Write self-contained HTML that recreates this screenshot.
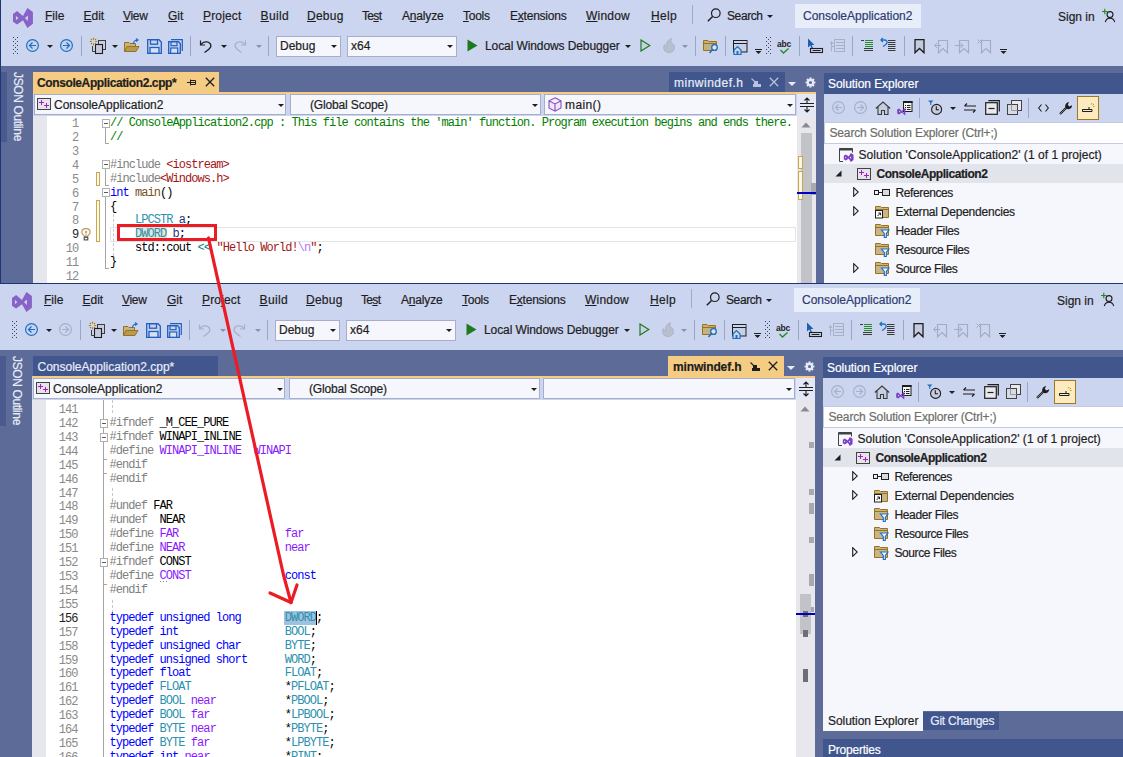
<!DOCTYPE html>
<html><head><meta charset="utf-8"><style>
html,body{margin:0;padding:0;}
body{width:1123px;height:757px;overflow:hidden;position:relative;background:#CCD5F0;font-family:"Liberation Sans",sans-serif;}
#r>div{position:absolute;}
#r div{box-sizing:content-box;}
.t{position:absolute;white-space:pre;-webkit-text-stroke:0.2px currentColor;}
.c{position:absolute;white-space:pre;font-family:"Liberation Mono",monospace;font-size:12px;line-height:13.92px;letter-spacing:-0.945px;}
u{text-decoration:underline;text-underline-offset:1px;}
</style></head><body><div id="r" style="position:absolute;left:0;top:0;width:1123px;height:757px;overflow:hidden">
<div style="left:0px;top:0px;width:1123px;height:66px;background:#CCD5F0;"></div>
<svg style="position:absolute;left:13px;top:8px;" width="20" height="20" viewBox="0 0 20 20"><path fill="#8862C6" fill-rule="evenodd" d="M0,5.9 L4.1,3.1 L10,7.9 L14.4,0 L19.9,3.9 L19.9,15.8 L14.4,19.9 L10,12.2 L4.1,16.6 L0,13.8 Z M2.9,7.9 L5.4,10.1 L2.9,12.2 Z M14.9,7.5 L12,10.1 L14.9,13 Z"/></svg>
<div class="t" style="left:45px;top:9.84px;font-size:12px;line-height:12px;color:#1E1E1E;font-weight:normal;font-family:'Liberation Sans',sans-serif;letter-spacing:0.000px;"><u>F</u>ile</div>
<div class="t" style="left:83.5px;top:9.84px;font-size:12px;line-height:12px;color:#1E1E1E;font-weight:normal;font-family:'Liberation Sans',sans-serif;letter-spacing:0.000px;"><u>E</u>dit</div>
<div class="t" style="left:123px;top:9.84px;font-size:12px;line-height:12px;color:#1E1E1E;font-weight:normal;font-family:'Liberation Sans',sans-serif;letter-spacing:-0.333px;"><u>V</u>iew</div>
<div class="t" style="left:168px;top:9.84px;font-size:12px;line-height:12px;color:#1E1E1E;font-weight:normal;font-family:'Liberation Sans',sans-serif;letter-spacing:0.000px;"><u>G</u>it</div>
<div class="t" style="left:203px;top:9.84px;font-size:12px;line-height:12px;color:#1E1E1E;font-weight:normal;font-family:'Liberation Sans',sans-serif;letter-spacing:0.167px;"><u>P</u>roject</div>
<div class="t" style="left:260.5px;top:9.84px;font-size:12px;line-height:12px;color:#1E1E1E;font-weight:normal;font-family:'Liberation Sans',sans-serif;letter-spacing:0.375px;"><u>B</u>uild</div>
<div class="t" style="left:307px;top:9.84px;font-size:12px;line-height:12px;color:#1E1E1E;font-weight:normal;font-family:'Liberation Sans',sans-serif;letter-spacing:0.250px;"><u>D</u>ebug</div>
<div class="t" style="left:362px;top:9.84px;font-size:12px;line-height:12px;color:#1E1E1E;font-weight:normal;font-family:'Liberation Sans',sans-serif;letter-spacing:-0.667px;">Te<u>s</u>t</div>
<div class="t" style="left:402px;top:9.84px;font-size:12px;line-height:12px;color:#1E1E1E;font-weight:normal;font-family:'Liberation Sans',sans-serif;letter-spacing:-0.167px;">A<u>n</u>alyze</div>
<div class="t" style="left:463px;top:9.84px;font-size:12px;line-height:12px;color:#1E1E1E;font-weight:normal;font-family:'Liberation Sans',sans-serif;letter-spacing:-0.250px;"><u>T</u>ools</div>
<div class="t" style="left:510px;top:9.84px;font-size:12px;line-height:12px;color:#1E1E1E;font-weight:normal;font-family:'Liberation Sans',sans-serif;letter-spacing:-0.222px;">E<u>x</u>tensions</div>
<div class="t" style="left:586px;top:9.84px;font-size:12px;line-height:12px;color:#1E1E1E;font-weight:normal;font-family:'Liberation Sans',sans-serif;letter-spacing:0.200px;"><u>W</u>indow</div>
<div class="t" style="left:651px;top:9.84px;font-size:12px;line-height:12px;color:#1E1E1E;font-weight:normal;font-family:'Liberation Sans',sans-serif;letter-spacing:0.333px;"><u>H</u>elp</div>
<div style="left:692px;top:5px;width:1px;height:19px;background:#A0AAC8;"></div>
<svg style="position:absolute;left:707px;top:8px;" width="14" height="14" viewBox="0 0 14 14"><circle cx="8.8" cy="5.2" r="4.3" fill="none" stroke="#1E1E1E" stroke-width="1.2"/><path d="M5.6,8.4 L0.8,13.2" stroke="#1E1E1E" stroke-width="1.4"/></svg>
<div class="t" style="left:727px;top:9.84px;font-size:12px;line-height:12px;color:#1E1E1E;font-weight:normal;font-family:'Liberation Sans',sans-serif;letter-spacing:-0.400px;">Search</div>
<svg style="position:absolute;left:767px;top:15px;" width="6" height="4.0" viewBox="0 0 6 4.0"><path d="M0,0 H6 L3.0,3.0 Z" fill="#1E1E1E"/></svg>
<div style="left:795px;top:4px;width:126px;height:24px;background:#E8EDFA;"></div>
<div class="t" style="left:803px;top:9.84px;font-size:12px;line-height:12px;color:#2E3A72;font-weight:normal;font-family:'Liberation Sans',sans-serif;letter-spacing:0.000px;">ConsoleApplication2</div>
<div class="t" style="left:1058px;top:10.84px;font-size:12px;line-height:12px;color:#1E1E1E;font-weight:normal;font-family:'Liberation Sans',sans-serif;letter-spacing:0.000px;">Sign in</div>
<svg style="position:absolute;left:1101px;top:8px;" width="15" height="15" viewBox="0 0 15 15"><path d="M1,3.5 H6.5 M3.75,0.8 V6.2" stroke="#1E8A1E" stroke-width="1.1"/><circle cx="9" cy="6.6" r="3" fill="none" stroke="#1E1E1E" stroke-width="1.1"/><path d="M4.3,14.2 C4.8,11.5 6.6,10.2 9,10.2 C11.4,10.2 13.2,11.5 13.7,14.2" fill="none" stroke="#1E1E1E" stroke-width="1.1"/></svg>
<svg style="position:absolute;left:13px;top:37px;" width="5" height="17" viewBox="0 0 5 17"><rect x="0" y="0" width="1" height="1" fill="#3C4168"/><rect x="4" y="0" width="1" height="1" fill="#3C4168"/><rect x="2" y="2" width="1" height="1" fill="#3C4168"/><rect x="0" y="4" width="1" height="1" fill="#3C4168"/><rect x="4" y="4" width="1" height="1" fill="#3C4168"/><rect x="2" y="6" width="1" height="1" fill="#3C4168"/><rect x="0" y="8" width="1" height="1" fill="#3C4168"/><rect x="4" y="8" width="1" height="1" fill="#3C4168"/><rect x="2" y="10" width="1" height="1" fill="#3C4168"/><rect x="0" y="12" width="1" height="1" fill="#3C4168"/><rect x="4" y="12" width="1" height="1" fill="#3C4168"/><rect x="2" y="14" width="1" height="1" fill="#3C4168"/><rect x="0" y="16" width="1" height="1" fill="#3C4168"/><rect x="4" y="16" width="1" height="1" fill="#3C4168"/></svg>
<svg style="position:absolute;left:26px;top:39px;" width="13" height="13" viewBox="0 0 13 13"><circle cx="6.5" cy="6.5" r="5.9" fill="#C6D3EE" stroke="#1E6FC0" stroke-width="1.2"/><path d="M10,6.5 H3.5 M6.5,3.5 L3.5,6.5 L6.5,9.5" fill="none" stroke="#1E6FC0" stroke-width="1.2"/></svg>
<svg style="position:absolute;left:47px;top:45px;" width="6" height="4.0" viewBox="0 0 6 4.0"><path d="M0,0 H6 L3.0,3.0 Z" fill="#1E1E1E"/></svg>
<svg style="position:absolute;left:60px;top:39px;" width="13" height="13" viewBox="0 0 13 13"><circle cx="6.5" cy="6.5" r="5.9" fill="#C6D3EE" stroke="#1E6FC0" stroke-width="1.2"/><path d="M3,6.5 H9.5 M6.5,3.5 L9.5,6.5 L6.5,9.5" fill="none" stroke="#1E6FC0" stroke-width="1.2"/></svg>
<div style="left:81px;top:36px;width:1px;height:20px;background:#9AA6C8;"></div>
<svg style="position:absolute;left:89px;top:37px;" width="18" height="18" viewBox="0 0 18 18"><rect x="9.5" y="3.5" width="7" height="9" fill="#C8CEE0" stroke="#3C3C3C" stroke-width="1"/><rect x="6.5" y="7.5" width="7" height="9" fill="#C4CADC" stroke="#1E1E1E" stroke-width="1.1"/><path d="M3.5,9 V14.5 H6.5" fill="none" stroke="#3C3C3C" stroke-width="1"/><g stroke="#B07C08" stroke-width="1.1"><path d="M4.5,0.8 V2.8 M4.5,6.2 V8.2 M0.8,4.5 H2.8 M6.2,4.5 H8.2 M1.9,1.9 L3,3 M6,6 L7.1,7.1 M7.1,1.9 L6,3 M3,6 L1.9,7.1"/></g></svg>
<svg style="position:absolute;left:112px;top:45px;" width="6" height="4.0" viewBox="0 0 6 4.0"><path d="M0,0 H6 L3.0,3.0 Z" fill="#1E1E1E"/></svg>
<svg style="position:absolute;left:124px;top:38px;" width="16" height="15" viewBox="0 0 16 15"><path d="M0.5,4.5 H5 L6,5.5 H11.5 V13.5 H0.5 Z" fill="#C9B37A" stroke="#9A7318"/><path d="M0.5,13.5 L3,8.5 H15 L12,13.5 Z" fill="#B69A5A" stroke="#9A7318"/><path d="M9.5,6 C9.5,3 11,2 13.5,2 M12,0.5 L14,2 L12,3.5" fill="none" stroke="#1E6FC0" stroke-width="1.2"/></svg>
<svg style="position:absolute;left:147px;top:39px;" width="15" height="15" viewBox="0 0 15 15"><path d="M0.7,0.7 H12 L14.3,3 V14.3 H0.7 Z" fill="#C9D3EE" stroke="#1F5FBF" stroke-width="1.3"/><rect x="3.5" y="0.7" width="7" height="4.5" fill="none" stroke="#1F5FBF" stroke-width="1.3"/><rect x="3" y="8.5" width="9" height="5.8" fill="#D8E0F4" stroke="#1F5FBF" stroke-width="1.3"/></svg>
<svg style="position:absolute;left:168px;top:39px;" width="15" height="15" viewBox="0 0 15 15"><path d="M3,0.7 H14.3 V12" fill="none" stroke="#1F5FBF" stroke-width="1.2"/><path d="M0.7,2.7 H10.5 L12.3,4.5 V14.3 H0.7 Z" fill="#C9D3EE" stroke="#1F5FBF" stroke-width="1.3"/><rect x="3" y="2.7" width="6" height="4" fill="none" stroke="#1F5FBF" stroke-width="1.2"/><rect x="2.7" y="9" width="7" height="5.3" fill="#D8E0F4" stroke="#1F5FBF" stroke-width="1.2"/></svg>
<div style="left:190px;top:36px;width:1px;height:20px;background:#9AA6C8;"></div>
<svg style="position:absolute;left:199px;top:39px;" width="13" height="14" viewBox="0 0 13 14"><g ><path d="M1.5,1.5 V6 H6" fill="none" stroke="#1E1E1E" stroke-width="1.2"/><path d="M1.8,5.8 C4,2.5 9,2 11,4.5 C13,7 11.5,10 5.5,13.5" fill="none" stroke="#1E1E1E" stroke-width="1.3"/></g></svg>
<svg style="position:absolute;left:221px;top:45px;" width="6" height="4.0" viewBox="0 0 6 4.0"><path d="M0,0 H6 L3.0,3.0 Z" fill="#1E1E1E"/></svg>
<svg style="position:absolute;left:234px;top:39px;" width="13" height="14" viewBox="0 0 13 14"><g transform="translate(13,0) scale(-1,1)"><path d="M1.5,1.5 V6 H6" fill="none" stroke="#A8B0C6" stroke-width="1.2"/><path d="M1.8,5.8 C4,2.5 9,2 11,4.5 C13,7 11.5,10 5.5,13.5" fill="none" stroke="#A8B0C6" stroke-width="1.3"/></g></svg>
<svg style="position:absolute;left:256px;top:45px;" width="6" height="4.0" viewBox="0 0 6 4.0"><path d="M0,0 H6 L3.0,3.0 Z" fill="#8A92A8"/></svg>
<div style="left:268px;top:36px;width:1px;height:20px;background:#9AA6C8;"></div>
<div style="left:276px;top:36px;width:63px;height:19px;background:#F5F7FC;border:1px solid #A6AECB;"></div>
<div class="t" style="left:280px;top:40.34px;font-size:12px;line-height:12px;color:#1E1E1E;font-weight:normal;font-family:'Liberation Sans',sans-serif;">Debug</div>
<svg style="position:absolute;left:331px;top:45px;" width="6" height="4.0" viewBox="0 0 6 4.0"><path d="M0,0 H6 L3.0,3.0 Z" fill="#1E1E1E"/></svg>
<div style="left:347px;top:36px;width:108px;height:19px;background:#F5F7FC;border:1px solid #A6AECB;"></div>
<div class="t" style="left:351px;top:40.34px;font-size:12px;line-height:12px;color:#1E1E1E;font-weight:normal;font-family:'Liberation Sans',sans-serif;">x64</div>
<svg style="position:absolute;left:447px;top:45px;" width="6" height="4.0" viewBox="0 0 6 4.0"><path d="M0,0 H6 L3.0,3.0 Z" fill="#1E1E1E"/></svg>
<svg style="position:absolute;left:467px;top:39px;" width="11" height="13" viewBox="0 0 11 13"><path d="M0.5,0.5 L10.5,6.5 L0.5,12.5 Z" fill="#1E7A1E"/></svg>
<div class="t" style="left:485px;top:40.34px;font-size:12px;line-height:12px;color:#1E1E1E;font-weight:normal;font-family:'Liberation Sans',sans-serif;letter-spacing:-0.095px;">Local Windows Debugger</div>
<svg style="position:absolute;left:625px;top:45px;" width="6" height="4.0" viewBox="0 0 6 4.0"><path d="M0,0 H6 L3.0,3.0 Z" fill="#1E1E1E"/></svg>
<svg style="position:absolute;left:639.5px;top:39px;" width="11" height="13" viewBox="0 0 11 13"><path d="M1,1 L9.8,6.5 L1,12 Z" fill="#C8D2E6" stroke="#1E7A1E" stroke-width="1.2"/></svg>
<svg style="position:absolute;left:662px;top:38px;" width="14" height="15" viewBox="0 0 14 15"><path d="M7,14.5 C2,14.5 0.5,10 2.5,6.5 C3,8.5 4,9 5,9 C3.5,5 6,2 9.5,0.5 C8,4 10,5 11,6 C13.5,8.5 13,14.5 7,14.5 Z" fill="#B8BFD0" stroke="#A8AFC0" stroke-width="0.8"/></svg>
<svg style="position:absolute;left:682px;top:45px;" width="6" height="4.0" viewBox="0 0 6 4.0"><path d="M0,0 H6 L3.0,3.0 Z" fill="#8A92A8"/></svg>
<div style="left:695px;top:36px;width:1px;height:20px;background:#9AA6C8;"></div>
<svg style="position:absolute;left:703px;top:39px;" width="16" height="15" viewBox="0 0 16 15"><path d="M0.5,1.5 H5 L6,2.5 H13.5 V11.5 H0.5 Z" fill="#C4B080" stroke="#9A7318"/><path d="M0.5,4.5 H13.5" stroke="#9A7318"/><circle cx="11.5" cy="8.5" r="2.8" fill="#DCE6F8" stroke="#1E6FC0" stroke-width="1.3"/><path d="M9.5,10.5 L6.5,14" stroke="#1E6FC0" stroke-width="1.5"/></svg>
<div style="left:725px;top:36px;width:1px;height:20px;background:#9AA6C8;"></div>
<svg style="position:absolute;left:733px;top:40px;" width="15" height="15" viewBox="0 0 15 15"><rect x="0.5" y="0.5" width="13.5" height="11.5" fill="#C8D0E8" stroke="#1E1E1E"/><rect x="1" y="1" width="12.5" height="2.5" fill="#CCD5F0"/><path d="M0.5,3.5 H14" stroke="#1E1E1E"/><path d="M1,10 L4.5,6.5 L8,10 V14.5 H1 Z" fill="#CCD5F0" stroke="#1E6FC0" stroke-width="1.2"/><rect x="3.5" y="11" width="2" height="3.5" fill="#1E6FC0"/></svg>
<svg style="position:absolute;left:755px;top:48px;" width="7" height="7" viewBox="0 0 7 7"><path d="M0,1.5 H7" stroke="#1E1E1E"/><path d="M0.5,3 H6.5 L3.5,6 Z" fill="#1E1E1E"/></svg>
<svg style="position:absolute;left:766px;top:37px;" width="5" height="17" viewBox="0 0 5 17"><rect x="0" y="0" width="1" height="1" fill="#3C4168"/><rect x="4" y="0" width="1" height="1" fill="#3C4168"/><rect x="2" y="2" width="1" height="1" fill="#3C4168"/><rect x="0" y="4" width="1" height="1" fill="#3C4168"/><rect x="4" y="4" width="1" height="1" fill="#3C4168"/><rect x="2" y="6" width="1" height="1" fill="#3C4168"/><rect x="0" y="8" width="1" height="1" fill="#3C4168"/><rect x="4" y="8" width="1" height="1" fill="#3C4168"/><rect x="2" y="10" width="1" height="1" fill="#3C4168"/><rect x="0" y="12" width="1" height="1" fill="#3C4168"/><rect x="4" y="12" width="1" height="1" fill="#3C4168"/><rect x="2" y="14" width="1" height="1" fill="#3C4168"/><rect x="0" y="16" width="1" height="1" fill="#3C4168"/><rect x="4" y="16" width="1" height="1" fill="#3C4168"/></svg>
<svg style="position:absolute;left:777px;top:37px;" width="15" height="18" viewBox="0 0 15 18"><text x="0" y="10" font-family="Liberation Sans" font-weight="bold" font-size="8.5" fill="#1E1E1E" letter-spacing="-0.2">abc</text><path d="M3.5,13 L6.5,16 L11.5,11.5" fill="none" stroke="#1E8A1E" stroke-width="1.3"/></svg>
<div style="left:799px;top:36px;width:1px;height:20px;background:#9AA6C8;"></div>
<svg style="position:absolute;left:807px;top:38px;" width="17" height="16" viewBox="0 0 17 16"><path d="M1,0.5 L1,9.5 L3.2,7.5 L4.8,10.5 L6,10 L4.6,7 L7.5,7 Z" fill="#1E5FB0"/><rect x="3.5" y="10.5" width="12" height="4" fill="none" stroke="#1E1E1E" stroke-width="1.1"/><path d="M5.5,12.5 H13.5" stroke="#1E1E1E"/></svg>
<svg style="position:absolute;left:830px;top:38px;" width="15" height="15" viewBox="0 0 15 15"><g stroke="#A8B0C6" fill="none"><path d="M1.5,3.5 V13.5 M1.5,8.5 H4 M3,6 L1.5,3.5 L0,6"/><path d="M6,1.5 H14 M6,4.5 H14 M6,7.5 H14 M6,10.5 H14 M6,13.5 H14"/><rect x="4.5" y="1.5" width="10" height="12"/></g></svg>
<div style="left:852px;top:36px;width:1px;height:20px;background:#9AA6C8;"></div>
<svg style="position:absolute;left:861px;top:37px;" width="16" height="15" viewBox="0 0 16 15"><path d="M0,3.5 H3" stroke="#3A3A3A"/><path d="M4,3.5 H12" stroke="#2A8A2A"/><path d="M4,5.5 H12" stroke="#2A8A2A"/><path d="M4,7.5 H12" stroke="#2A8A2A"/><path d="M4,9.5 H12" stroke="#2A8A2A"/><path d="M3,11.5 H12" stroke="#3A3A3A"/><path d="M3,13.5 H12" stroke="#3A3A3A"/></svg>
<svg style="position:absolute;left:880px;top:37px;" width="16" height="15" viewBox="0 0 16 15"><path d="M8,3.5 H15.5" stroke="#3A3A3A"/><path d="M8,5.5 H15.5" stroke="#3A3A3A"/><path d="M8,7.5 H15.5" stroke="#3A3A3A"/><path d="M8,9.5 H15.5" stroke="#3A3A3A"/><path d="M8,11.5 H15.5" stroke="#3A3A3A"/><path d="M8,13.5 H15.5" stroke="#3A3A3A"/><path d="M1.5,3 H4.5 C6.5,3 7.5,4.5 7,6 C6.5,7.5 4.5,8.5 3,9.5 M2.8,1 L1,3 L2.8,5" fill="none" stroke="#1E6FC0" stroke-width="1.3"/></svg>
<div style="left:904px;top:36px;width:1px;height:20px;background:#9AA6C8;"></div>
<svg style="position:absolute;left:913.5px;top:38.5px;" width="11" height="15" viewBox="0 0 11 15"><path d="M1,0.7 H10 V13.8 L5.5,9.5 L1,13.8 Z" fill="#C4CBE0" stroke="#1E1E1E" stroke-width="1.3"/></svg>
<svg style="position:absolute;left:934px;top:38.5px;" width="15" height="15" viewBox="0 0 15 15"><path d="M4.5,1.5 H13.5 V13.8 L9,9.5 L4.5,13.8 Z" fill="none" stroke="#A4ACC2" stroke-width="1.2"/><path d="M0.5,6.5 H7 M3,4 L0.5,6.5 L3,9" fill="none" stroke="#A4ACC2"/></svg>
<svg style="position:absolute;left:955px;top:38.5px;" width="15" height="15" viewBox="0 0 15 15"><path d="M4.5,1.5 H13.5 V13.8 L9,9.5 L4.5,13.8 Z" fill="none" stroke="#A4ACC2" stroke-width="1.2"/><path d="M0,6.5 H8 M5.5,4 L8,6.5 L5.5,9" fill="none" stroke="#A4ACC2"/></svg>
<svg style="position:absolute;left:977px;top:38.5px;" width="15" height="15" viewBox="0 0 15 15"><path d="M4.5,1.5 H13.5 V13.8 L9,9.5 L4.5,13.8 Z" fill="none" stroke="#A4ACC2" stroke-width="1.2"/><path d="M0.5,0.5 L4.5,4.5 M4.5,0.5 L0.5,4.5" stroke="#A4ACC2"/></svg>
<svg style="position:absolute;left:1000px;top:48px;" width="7" height="7" viewBox="0 0 7 7"><path d="M0,1.5 H7" stroke="#1E1E1E"/><path d="M0.5,3 H6.5 L3.5,6 Z" fill="#1E1E1E"/></svg>
<div style="left:0px;top:66px;width:1123px;height:217px;background:#5D6B99;"></div>
<div style="left:1px;top:72px;width:6px;height:70px;background:#4A5A8E;"></div>
<div class="t" style="left:11px;top:72px;width:14px;height:72px;"><div style="position:absolute;left:0;top:0;transform-origin:0 0;transform:translate(13px,0) rotate(90deg);font-size:12px;line-height:13px;color:#E8ECF8;letter-spacing:-0.364px;font-family:'Liberation Sans',sans-serif;white-space:nowrap">JSON Outline</div></div>
<div style="left:33px;top:72px;width:186px;height:20px;background:#F5CC84;"></div>
<div class="t" style="left:37px;top:76.84px;font-size:12px;line-height:12px;color:#1E1E1E;font-weight:bold;font-family:'Liberation Sans',sans-serif;letter-spacing:-0.391px;">ConsoleApplication2.cpp*</div>
<svg style="position:absolute;left:187px;top:78px;" width="10" height="9" viewBox="0 0 10 9"><path d="M0,4.5 H3 M3.5,1.5 V7.5 M3.5,2.5 H8.5 V6.5 H3.5" fill="none" stroke="#1E1E1E" stroke-width="1"/><rect x="3.5" y="4" width="5" height="1" fill="#1E1E1E"/></svg>
<svg style="position:absolute;left:205px;top:77px;" width="10" height="10" viewBox="0 0 10 10"><path d="M0.8,0.8 L9.2,9.2 M9.2,0.8 L0.8,9.2" stroke="#1E1E1E" stroke-width="1.3"/></svg>
<div style="left:669px;top:72px;width:116px;height:20px;background:#40568D;"></div>
<div class="t" style="left:674px;top:76.84px;font-size:12px;line-height:12px;color:#E8ECF8;font-weight:normal;font-family:'Liberation Sans',sans-serif;letter-spacing:0.500px;">minwindef.h</div>
<svg style="position:absolute;left:751px;top:78px;" width="11" height="10" viewBox="0 0 11 10"><path d="M0.5,0.5 L3.5,3.5" stroke="#B8C2DC" stroke-width="1.1"/><path d="M3,3 H7 V6 H10 V9 H2 V6 H3 Z" fill="#B8C2DC"/></svg>
<svg style="position:absolute;left:769px;top:77px;" width="10" height="10" viewBox="0 0 10 10"><path d="M0.8,0.8 L9.2,9.2 M9.2,0.8 L0.8,9.2" stroke="#B8C2DC" stroke-width="1.3"/></svg>
<svg style="position:absolute;left:788px;top:82px;" width="8" height="5.0" viewBox="0 0 8 5.0"><path d="M0,0 H8 L4.0,4.0 Z" fill="#E8ECF8"/></svg>
<svg style="position:absolute;left:805px;top:77px;" width="11" height="11" viewBox="0 0 11 11"><path d="M10.38,4.41 L10.38,6.59 L9.03,6.59 L8.77,7.23 L9.72,8.18 L8.18,9.72 L7.23,8.77 L6.59,9.03 L6.59,10.38 L4.41,10.38 L4.41,9.03 L3.77,8.77 L2.82,9.72 L1.28,8.18 L2.23,7.23 L1.97,6.59 L0.62,6.59 L0.62,4.41 L1.97,4.41 L2.23,3.77 L1.28,2.82 L2.82,1.28 L3.77,2.23 L4.41,1.97 L4.41,0.62 L6.59,0.62 L6.59,1.97 L7.23,2.23 L8.18,1.28 L9.72,2.82 L8.77,3.77 L9.03,4.41 Z M5.5,3.9 A1.6,1.6 0 1 0 5.5,7.1 A1.6,1.6 0 1 0 5.5,3.9 Z" fill="#E8ECF8" fill-rule="evenodd"/></svg>
<div style="left:33px;top:92px;width:783px;height:2px;background:#F5CC84;"></div>
<div style="left:33px;top:94px;width:783px;height:22px;background:#CCD5F0;"></div>
<div style="left:34px;top:94px;width:250px;height:19px;background:#F5F7FC;border:1px solid #A6AECB;"></div>
<svg style="position:absolute;left:37px;top:98px;" width="14" height="12" viewBox="0 0 14 12"><rect x="0.5" y="0.5" width="13" height="11" fill="#E4E4EA" stroke="#424242"/><path d="M4.5,2 V7 M2,4.5 H7 M9.5,5 V10 M7,7.5 H12" stroke="#A020C0" stroke-width="1"/></svg>
<div class="t" style="left:54px;top:98.84px;font-size:12px;line-height:12px;color:#1E1E1E;font-weight:normal;font-family:'Liberation Sans',sans-serif;letter-spacing:0.000px;">ConsoleApplication2</div>
<svg style="position:absolute;left:278px;top:104px;" width="6" height="4.0" viewBox="0 0 6 4.0"><path d="M0,0 H6 L3.0,3.0 Z" fill="#1E1E1E"/></svg>
<div style="left:290px;top:94px;width:249px;height:19px;background:#F5F7FC;border:1px solid #A6AECB;"></div>
<div class="t" style="left:310px;top:98.84px;font-size:12px;line-height:12px;color:#1E1E1E;font-weight:normal;font-family:'Liberation Sans',sans-serif;letter-spacing:-0.154px;">(Global Scope)</div>
<svg style="position:absolute;left:532px;top:104px;" width="6" height="4.0" viewBox="0 0 6 4.0"><path d="M0,0 H6 L3.0,3.0 Z" fill="#1E1E1E"/></svg>
<div style="left:544px;top:94px;width:250px;height:19px;background:#F5F7FC;border:1px solid #A6AECB;"></div>
<svg style="position:absolute;left:548px;top:97px;" width="14" height="15" viewBox="0 0 14 15"><path d="M7,0.8 L13,3.8 V11 L7,14.2 L1,11 V3.8 Z M1,3.8 L7,7 L13,3.8 M7,7 V14.2" fill="#EFE6F8" stroke="#8A4CC8" stroke-width="1.1"/></svg>
<div class="t" style="left:565px;top:98.84px;font-size:12px;line-height:12px;color:#1E1E1E;font-weight:normal;font-family:'Liberation Sans',sans-serif;letter-spacing:0.400px;">main()</div>
<svg style="position:absolute;left:787px;top:104px;" width="6" height="4.0" viewBox="0 0 6 4.0"><path d="M0,0 H6 L3.0,3.0 Z" fill="#1E1E1E"/></svg>
<div style="left:797px;top:94px;width:19px;height:22px;background:#E4E8F6;"></div>
<svg style="position:absolute;left:800px;top:97px;" width="14" height="16" viewBox="0 0 14 16"><path d="M0,6.5 H14 M0,9.5 H14 M7,1 V6 M7,10 V15 M4.5,3.5 L7,1 L9.5,3.5 M4.5,12.5 L7,15 L9.5,12.5" fill="none" stroke="#1E1E1E" stroke-width="1.1"/></svg>
<div style="left:33px;top:116px;width:764px;height:167px;background:#FFFFFF;"></div>
<div style="left:33px;top:116px;width:14px;height:167px;background:#E6E7EC;"></div>
<div style="left:797px;top:116px;width:19px;height:167px;background:#E8E8EC;"></div>
<svg style="position:absolute;left:801px;top:122px;" width="10" height="6" viewBox="0 0 10 6"><path d="M0.5,5.5 L5,0.5 L9.5,5.5 Z" fill="#868999"/></svg>
<div style="left:824px;top:73px;width:299px;height:21px;background:#40568D;"></div>
<div class="t" style="left:828px;top:77.84px;font-size:12px;line-height:12px;color:#FFFFFF;font-weight:normal;font-family:'Liberation Sans',sans-serif;letter-spacing:-0.062px;">Solution Explorer</div>
<div style="left:824px;top:94px;width:299px;height:28px;background:#CCD5F0;"></div>
<svg style="position:absolute;left:832px;top:101px;" width="13" height="13" viewBox="0 0 13 13"><circle cx="6.5" cy="6.5" r="5.9" fill="none" stroke="#A8B0C6" stroke-width="1.2"/><path d="M10,6.5 H3.5 M6.5,3.5 L3.5,6.5 L6.5,9.5" fill="none" stroke="#A8B0C6" stroke-width="1.2"/></svg>
<svg style="position:absolute;left:854px;top:101px;" width="13" height="13" viewBox="0 0 13 13"><circle cx="6.5" cy="6.5" r="5.9" fill="none" stroke="#A8B0C6" stroke-width="1.2"/><path d="M3,6.5 H9.5 M6.5,3.5 L9.5,6.5 L6.5,9.5" fill="none" stroke="#A8B0C6" stroke-width="1.2"/></svg>
<svg style="position:absolute;left:875px;top:101px;" width="16" height="15" viewBox="0 0 16 15"><path d="M3,6 V13.5 H6.5 V9.5 H9.5 V13.5 H13 V6 L8,1.5 Z" fill="#C8CEE2"/><path d="M0.8,7.5 L8,1 L15.2,7.5 M3,6 V13.5 H6.5 V9.5 H9.5 V13.5 H13 V6" fill="none" stroke="#3A3A3A" stroke-width="1.1"/></svg>
<svg style="position:absolute;left:896px;top:100px;" width="17" height="17" viewBox="0 0 17 17"><rect x="7.5" y="1.5" width="8.5" height="10" fill="#F4F4F8" stroke="#1E1E1E"/><rect x="7.5" y="1" width="9" height="2" fill="#1E1E1E"/><path d="M11,5.5 H14.5 M11,7.5 H14.5 M11,9.5 H14.5 M9,5.5 H10 M9,7.5 H10 M9,9.5 H10" stroke="#1E1E1E"/><path d="M1.2,9.5 L3,8.6 L5.8,11 L9.3,7.8 V15.6 L5.8,12.6 L3,14.6 L1.2,13.6 Z M3,10.6 V12.6 L4.5,11.6 Z M7.8,10 L6.6,11.6 L7.8,13.3 Z" fill="#7B3FC4" fill-rule="evenodd"/></svg>
<div style="left:919px;top:98px;width:1px;height:20px;background:#9AA6C8;"></div>
<svg style="position:absolute;left:928px;top:100px;" width="15" height="16" viewBox="0 0 15 16"><path d="M0,0.5 H5.5 L3.3,2.8 V5 H2.2 V2.8 Z" fill="#1E6FC0"/><circle cx="8.6" cy="9.4" r="5" fill="#C8CEE2" stroke="#1E1E1E" stroke-width="1.1"/><path d="M8.3,6.3 V9.8 H11" fill="none" stroke="#1E1E1E" stroke-width="1.1"/></svg>
<svg style="position:absolute;left:950px;top:107px;" width="6" height="4.0" viewBox="0 0 6 4.0"><path d="M0,0 H6 L3.0,3.0 Z" fill="#1E1E1E"/></svg>
<svg style="position:absolute;left:963px;top:103px;" width="14" height="10" viewBox="0 0 14 10"><path d="M13,3 H1.5 M4,0.5 L1.5,3 M1,7 H12.5 M10,9.5 L12.5,7" fill="none" stroke="#1E1E1E" stroke-width="1.2"/></svg>
<svg style="position:absolute;left:985px;top:100px;" width="15" height="15" viewBox="0 0 15 15"><rect x="0.7" y="2.7" width="11.6" height="11.6" fill="#E8E8EE" stroke="#1E1E1E" stroke-width="1.2"/><path d="M3.5,0.7 H14.3 V11.5" fill="none" stroke="#1E1E1E" stroke-width="1.2"/><path d="M3.5,8.5 H9.5" stroke="#1E1E1E" stroke-width="1.2"/></svg>
<svg style="position:absolute;left:1007px;top:100px;" width="15" height="15" viewBox="0 0 15 15"><rect x="4.5" y="0.5" width="10" height="10" fill="#E8E8EE" stroke="#424242"/><rect x="0.5" y="4.5" width="10" height="10" fill="#DADAE2" stroke="#424242"/><path d="M4.5,4.5 V10.5 H10.5" fill="none" stroke="#9A9AA8"/></svg>
<div style="left:1028px;top:98px;width:1px;height:20px;background:#9AA6C8;"></div>
<svg style="position:absolute;left:1038px;top:104px;" width="11" height="8" viewBox="0 0 11 8"><path d="M3.5,0.5 L0.7,4 L3.5,7.5 M7.5,0.5 L10.3,4 L7.5,7.5" fill="none" stroke="#1E1E1E" stroke-width="1.1"/></svg>
<svg style="position:absolute;left:1059px;top:101px;" width="14" height="14" viewBox="0 0 14 14"><path d="M1,13 L7,7" stroke="#1E1E1E" stroke-width="2.2"/><path d="M1,13 L7,7" stroke="#888" stroke-width="0.8"/><path d="M6.5,7.5 C5.5,5 6.5,1.5 10,1 L8.8,3.8 L10.3,5.5 L13.2,4.2 C13,7.5 10,9 7,7.8 Z" fill="#1E1E1E"/></svg>
<div style="left:1077px;top:96px;width:20px;height:22px;background:#FCEBC0;border:1px solid #A07820;"></div>
<svg style="position:absolute;left:1081px;top:103px;" width="14" height="10" viewBox="0 0 14 10"><path d="M1.5,6.5 V8.5 H11 V6.5 Z" fill="none" stroke="#1E1E1E"/><path d="M1.5,6.5 H8 M8,6.5 V4" stroke="#1E1E1E"/><path d="M10,1.5 L11,0 M12,3.5 H13.5 M11.5,2.2 L13,1" stroke="#C8A000"/></svg>
<div style="left:824px;top:122px;width:298px;height:20px;background:#FFFFFF;border:1px solid #C4CAE0;"></div>
<div class="t" style="left:829.5px;top:126.84px;font-size:12px;line-height:12px;color:#6D6D6D;font-weight:normal;font-family:'Liberation Sans',sans-serif;letter-spacing:-0.156px;">Search Solution Explorer (Ctrl+;)</div>
<div style="left:824px;top:144px;width:299px;height:139px;background:#F6F7FC;"></div>
<div style="left:824px;top:164px;width:299px;height:19px;background:#E2E4EC;"></div>
<svg style="position:absolute;left:839px;top:148px;" width="15" height="14" viewBox="0 0 15 14"><path d="M4,13.5 H0.5 V0.5 H13.5 V4.5" fill="none" stroke="#424242"/><rect x="0.5" y="0.5" width="13" height="2" fill="#424242"/><path transform="translate(4.8,5.0) scale(0.49,0.45)" d="M0,5.9 L4.1,3.1 L10,7.9 L14.4,0 L19.9,3.9 L19.9,15.8 L14.4,19.9 L10,12.2 L4.1,16.6 L0,13.8 Z M2.9,7.9 L5.4,10.1 L2.9,12.2 Z M14.9,7.5 L12,10.1 L14.9,13 Z" fill="#7B3FC4" fill-rule="evenodd"/></svg>
<div class="t" style="left:858.5px;top:148.84px;font-size:12px;line-height:12px;color:#1E1E1E;font-weight:normal;font-family:'Liberation Sans',sans-serif;letter-spacing:0.043px;">Solution &#x27;ConsoleApplication2&#x27; (1 of 1 project)</div>
<svg style="position:absolute;left:835px;top:170px;" width="7" height="7" viewBox="0 0 7 7"><path d="M6.5,0.5 V6.5 H0.5 Z" fill="#1E1E1E"/></svg>
<svg style="position:absolute;left:857px;top:168px;" width="14" height="12" viewBox="0 0 14 12"><rect x="0.5" y="0.5" width="13" height="11" fill="#E4E4EA" stroke="#424242"/><path d="M4.5,2 V7 M2,4.5 H7 M9.5,5 V10 M7,7.5 H12" stroke="#A020C0" stroke-width="1"/></svg>
<div class="t" style="left:876.5px;top:167.84px;font-size:12px;line-height:12px;color:#1E1E1E;font-weight:bold;font-family:'Liberation Sans',sans-serif;letter-spacing:-0.444px;">ConsoleApplication2</div>
<svg style="position:absolute;left:853px;top:187px;" width="6" height="10" viewBox="0 0 6 10"><path d="M0.7,0.7 L5.3,5 L0.7,9.3 Z" fill="none" stroke="#1E1E1E" stroke-width="1.1"/></svg>
<svg style="position:absolute;left:874px;top:189px;" width="16" height="7" viewBox="0 0 16 7"><rect x="0.5" y="1.5" width="4" height="4" fill="#F0F0F0" stroke="#1E1E1E"/><path d="M4.5,3.5 H8" stroke="#1E1E1E"/><rect x="8.5" y="0.5" width="7" height="6" fill="#DADADA" stroke="#1E1E1E"/></svg>
<div class="t" style="left:895.5px;top:186.84px;font-size:12px;line-height:12px;color:#1E1E1E;font-weight:normal;font-family:'Liberation Sans',sans-serif;letter-spacing:-0.389px;">References</div>
<svg style="position:absolute;left:853px;top:206px;" width="6" height="10" viewBox="0 0 6 10"><path d="M0.7,0.7 L5.3,5 L0.7,9.3 Z" fill="none" stroke="#1E1E1E" stroke-width="1.1"/></svg>
<svg style="position:absolute;left:875px;top:205px;" width="15" height="15" viewBox="0 0 15 15"><path d="M0.5,1.5 H5.5 L6.5,2.5 H13.5 V12.5 H0.5 Z" fill="#C8B68A" stroke="#9A7318"/><path d="M0.5,4.5 H13.5" stroke="#9A7318"/><rect x="0.5" y="5.5" width="7" height="7.5" fill="#FFFFFF" stroke="#1E1E1E" stroke-width="1"/><path d="M2.5,11 L5.5,8 M3.3,8 H5.5 V10.2" fill="none" stroke="#1E1E1E" stroke-width="1"/></svg>
<div class="t" style="left:895.5px;top:205.84px;font-size:12px;line-height:12px;color:#1E1E1E;font-weight:normal;font-family:'Liberation Sans',sans-serif;letter-spacing:-0.225px;">External Dependencies</div>
<svg style="position:absolute;left:875px;top:223px;" width="15" height="15" viewBox="0 0 15 15"><path d="M0.5,1.5 H5.5 L6.5,2.5 H13.5 V12.5 H0.5 Z" fill="#C8B68A" stroke="#9A7318"/><path d="M0.5,4.5 H13.5" stroke="#9A7318"/><path d="M6.5,7 H14 L11.3,10.5 V14.5 H9.3 V10.5 Z" fill="#FFFFFF" stroke="#1E6FD0" stroke-width="1.2"/></svg>
<div class="t" style="left:895.5px;top:224.84px;font-size:12px;line-height:12px;color:#1E1E1E;font-weight:normal;font-family:'Liberation Sans',sans-serif;letter-spacing:-0.364px;">Header Files</div>
<svg style="position:absolute;left:875px;top:242px;" width="15" height="15" viewBox="0 0 15 15"><path d="M0.5,1.5 H5.5 L6.5,2.5 H13.5 V12.5 H0.5 Z" fill="#C8B68A" stroke="#9A7318"/><path d="M0.5,4.5 H13.5" stroke="#9A7318"/><path d="M6.5,7 H14 L11.3,10.5 V14.5 H9.3 V10.5 Z" fill="#FFFFFF" stroke="#1E6FD0" stroke-width="1.2"/></svg>
<div class="t" style="left:895.5px;top:243.84px;font-size:12px;line-height:12px;color:#1E1E1E;font-weight:normal;font-family:'Liberation Sans',sans-serif;letter-spacing:-0.462px;">Resource Files</div>
<svg style="position:absolute;left:853px;top:263px;" width="6" height="10" viewBox="0 0 6 10"><path d="M0.7,0.7 L5.3,5 L0.7,9.3 Z" fill="none" stroke="#1E1E1E" stroke-width="1.1"/></svg>
<svg style="position:absolute;left:875px;top:261px;" width="15" height="15" viewBox="0 0 15 15"><path d="M0.5,1.5 H5.5 L6.5,2.5 H13.5 V12.5 H0.5 Z" fill="#C8B68A" stroke="#9A7318"/><path d="M0.5,4.5 H13.5" stroke="#9A7318"/><path d="M6.5,7 H14 L11.3,10.5 V14.5 H9.3 V10.5 Z" fill="#FFFFFF" stroke="#1E6FD0" stroke-width="1.2"/></svg>
<div class="t" style="left:895.5px;top:262.84px;font-size:12px;line-height:12px;color:#1E1E1E;font-weight:normal;font-family:'Liberation Sans',sans-serif;letter-spacing:-0.409px;">Source Files</div>
<div style="left:110px;top:227px;width:684px;height:13px;background:transparent;border:1px solid #E4E4E4;"></div>
<div style="left:136px;top:228px;width:31px;height:13px;background:#E2E6D6;"></div>
<div style="left:96px;top:172px;width:2px;height:12px;background:#FAF7EC;border:1px solid #C9A84A;"></div>
<div style="left:96px;top:200px;width:2px;height:40px;background:#FAF7EC;border:1px solid #C9A84A;"></div>
<svg style="position:absolute;left:81px;top:228px;" width="11" height="13" viewBox="0 0 11 13"><path d="M3.5,8.5 C3,7 0.8,6.2 0.8,4.3 C0.8,2 2.7,0.6 5,0.6 C7.3,0.6 9.2,2 9.2,4.3 C9.2,6.2 7,7 6.5,8.5 Z" fill="#FFFFFF" stroke="#B8975A" stroke-width="1.1"/><path d="M5,8 V5.5 M3.8,4 C3.8,3 6.2,3 6.2,4 C6.2,5 3.8,5 3.8,4" fill="none" stroke="#B8975A" stroke-width="0.9"/><rect x="3.2" y="9.3" width="3.6" height="2.6" fill="#FFFFFF" stroke="#4A4A4A" stroke-width="1.1"/></svg>
<svg style="position:absolute;left:102px;top:119px;" width="8" height="9" viewBox="0 0 8 9"><rect x="0.5" y="0.5" width="7" height="8" fill="#FFF" stroke="#B0B0B0"/><path d="M2,4.5 H6" stroke="#5A5A5A"/></svg>
<div style="left:105px;top:128px;width:1px;height:16px;background:#A5A5A5;"></div>
<div style="left:105px;top:143px;width:4px;height:1px;background:#A5A5A5;"></div>
<svg style="position:absolute;left:102px;top:160px;" width="8" height="9" viewBox="0 0 8 9"><rect x="0.5" y="0.5" width="7" height="8" fill="#FFF" stroke="#B0B0B0"/><path d="M2,4.5 H6" stroke="#5A5A5A"/></svg>
<div style="left:105px;top:169px;width:1px;height:17px;background:#A5A5A5;"></div>
<div style="left:105px;top:185px;width:4px;height:1px;background:#A5A5A5;"></div>
<svg style="position:absolute;left:102px;top:188px;" width="8" height="9" viewBox="0 0 8 9"><rect x="0.5" y="0.5" width="7" height="8" fill="#FFF" stroke="#B0B0B0"/><path d="M2,4.5 H6" stroke="#5A5A5A"/></svg>
<div style="left:105px;top:197px;width:1px;height:72px;background:#A5A5A5;"></div>
<div style="left:105px;top:268px;width:4px;height:1px;background:#A5A5A5;"></div>
<div style="left:113px;top:214px;width:0;height:42px;border-left:1px dashed #C8C8C8"></div>
<div style="left:33px;top:116px;width:797px;height:167px;overflow:hidden">
<div class="c" style="left:5.200000000000003px;top:2.00px;width:40px;text-align:right;color:#8A8A8A">1</div>
<div class="c" style="left:77px;top:1.00px"><span style="color:#008000">// ConsoleApplication2.cpp : This file contains the &#x27;main&#x27; function. Program execution begins and ends there.</span></div>
<div class="c" style="left:5.200000000000003px;top:15.92px;width:40px;text-align:right;color:#8A8A8A">2</div>
<div class="c" style="left:77px;top:14.92px"><span style="color:#008000">//</span></div>
<div class="c" style="left:5.200000000000003px;top:29.84px;width:40px;text-align:right;color:#8A8A8A">3</div>
<div class="c" style="left:77px;top:28.84px"></div>
<div class="c" style="left:5.200000000000003px;top:43.76px;width:40px;text-align:right;color:#8A8A8A">4</div>
<div class="c" style="left:77px;top:42.76px"><span style="color:#808080">#include </span><span style="color:#A31515">&lt;iostream&gt;</span></div>
<div class="c" style="left:5.200000000000003px;top:57.68px;width:40px;text-align:right;color:#8A8A8A">5</div>
<div class="c" style="left:77px;top:56.68px"><span style="color:#808080">#include</span><span style="color:#A31515">&lt;Windows.h&gt;</span></div>
<div class="c" style="left:5.200000000000003px;top:71.60px;width:40px;text-align:right;color:#8A8A8A">6</div>
<div class="c" style="left:77px;top:70.60px"><span style="color:#0000FF">int</span><span style="color:#000000"> </span><span style="color:#74531F">main</span><span style="color:#000000">()</span></div>
<div class="c" style="left:5.200000000000003px;top:85.52px;width:40px;text-align:right;color:#8A8A8A">7</div>
<div class="c" style="left:77px;top:84.52px"><span style="color:#000000">{</span></div>
<div class="c" style="left:5.200000000000003px;top:99.44px;width:40px;text-align:right;color:#8A8A8A">8</div>
<div class="c" style="left:77px;top:98.44px"><span style="color:#000000">    </span><span style="color:#2B91AF">LPCSTR</span><span style="color:#000000"> </span><span style="color:#1F377F">a</span><span style="color:#000000">;</span></div>
<div class="c" style="left:5.200000000000003px;top:113.36px;width:40px;text-align:right;color:#1E1E1E">9</div>
<div class="c" style="left:77px;top:112.36px"><span style="color:#000000">    </span><span style="color:#2B91AF">DWORD</span><span style="color:#000000"> </span><span style="color:#1F377F">b</span><span style="color:#000000">;</span></div>
<div class="c" style="left:5.200000000000003px;top:127.28px;width:40px;text-align:right;color:#8A8A8A">10</div>
<div class="c" style="left:77px;top:126.28px"><span style="color:#000000">    std::cout </span><span style="color:#008080">&lt;&lt;</span><span style="color:#000000"> </span><span style="color:#A31515">&quot;Hello World!</span><span style="color:#B776FB">\n</span><span style="color:#A31515">&quot;</span><span style="color:#000000">;</span></div>
<div class="c" style="left:5.200000000000003px;top:141.20px;width:40px;text-align:right;color:#8A8A8A">11</div>
<div class="c" style="left:77px;top:140.20px"><span style="color:#000000">}</span></div>
<div class="c" style="left:5.200000000000003px;top:155.12px;width:40px;text-align:right;color:#8A8A8A">12</div>
<div class="c" style="left:77px;top:154.12px"></div>
</div>
<div style="left:801px;top:133px;width:11px;height:150px;background:#C2C3C9;"></div>
<div style="left:798px;top:156px;width:3px;height:11px;background:#FAF7EC;border:1px solid #C9A84A;"></div>
<div style="left:798px;top:171px;width:3px;height:27px;background:#FAF7EC;border:1px solid #C9A84A;"></div>
<div style="left:811px;top:183px;width:5px;height:12px;background:#A8A8B0;"></div>
<div style="left:797px;top:192px;width:19px;height:2px;background:#0000C0;"></div>
<div style="left:0px;top:283px;width:1123px;height:1px;background:#1E3674;"></div>
<div style="left:-1px;top:284px;width:1124px;height:66px;background:#CCD5F0;"></div>
<svg style="position:absolute;left:12px;top:292px;" width="20" height="20" viewBox="0 0 20 20"><path fill="#8862C6" fill-rule="evenodd" d="M0,5.9 L4.1,3.1 L10,7.9 L14.4,0 L19.9,3.9 L19.9,15.8 L14.4,19.9 L10,12.2 L4.1,16.6 L0,13.8 Z M2.9,7.9 L5.4,10.1 L2.9,12.2 Z M14.9,7.5 L12,10.1 L14.9,13 Z"/></svg>
<div class="t" style="left:44px;top:293.84px;font-size:12px;line-height:12px;color:#1E1E1E;font-weight:normal;font-family:'Liberation Sans',sans-serif;letter-spacing:0.000px;"><u>F</u>ile</div>
<div class="t" style="left:82.5px;top:293.84px;font-size:12px;line-height:12px;color:#1E1E1E;font-weight:normal;font-family:'Liberation Sans',sans-serif;letter-spacing:0.000px;"><u>E</u>dit</div>
<div class="t" style="left:122px;top:293.84px;font-size:12px;line-height:12px;color:#1E1E1E;font-weight:normal;font-family:'Liberation Sans',sans-serif;letter-spacing:-0.333px;"><u>V</u>iew</div>
<div class="t" style="left:167px;top:293.84px;font-size:12px;line-height:12px;color:#1E1E1E;font-weight:normal;font-family:'Liberation Sans',sans-serif;letter-spacing:0.000px;"><u>G</u>it</div>
<div class="t" style="left:202px;top:293.84px;font-size:12px;line-height:12px;color:#1E1E1E;font-weight:normal;font-family:'Liberation Sans',sans-serif;letter-spacing:0.167px;"><u>P</u>roject</div>
<div class="t" style="left:259.5px;top:293.84px;font-size:12px;line-height:12px;color:#1E1E1E;font-weight:normal;font-family:'Liberation Sans',sans-serif;letter-spacing:0.375px;"><u>B</u>uild</div>
<div class="t" style="left:306px;top:293.84px;font-size:12px;line-height:12px;color:#1E1E1E;font-weight:normal;font-family:'Liberation Sans',sans-serif;letter-spacing:0.250px;"><u>D</u>ebug</div>
<div class="t" style="left:361px;top:293.84px;font-size:12px;line-height:12px;color:#1E1E1E;font-weight:normal;font-family:'Liberation Sans',sans-serif;letter-spacing:-0.667px;">Te<u>s</u>t</div>
<div class="t" style="left:401px;top:293.84px;font-size:12px;line-height:12px;color:#1E1E1E;font-weight:normal;font-family:'Liberation Sans',sans-serif;letter-spacing:-0.167px;">A<u>n</u>alyze</div>
<div class="t" style="left:462px;top:293.84px;font-size:12px;line-height:12px;color:#1E1E1E;font-weight:normal;font-family:'Liberation Sans',sans-serif;letter-spacing:-0.250px;"><u>T</u>ools</div>
<div class="t" style="left:509px;top:293.84px;font-size:12px;line-height:12px;color:#1E1E1E;font-weight:normal;font-family:'Liberation Sans',sans-serif;letter-spacing:-0.222px;">E<u>x</u>tensions</div>
<div class="t" style="left:585px;top:293.84px;font-size:12px;line-height:12px;color:#1E1E1E;font-weight:normal;font-family:'Liberation Sans',sans-serif;letter-spacing:0.200px;"><u>W</u>indow</div>
<div class="t" style="left:650px;top:293.84px;font-size:12px;line-height:12px;color:#1E1E1E;font-weight:normal;font-family:'Liberation Sans',sans-serif;letter-spacing:0.333px;"><u>H</u>elp</div>
<div style="left:691px;top:289px;width:1px;height:19px;background:#A0AAC8;"></div>
<svg style="position:absolute;left:706px;top:292px;" width="14" height="14" viewBox="0 0 14 14"><circle cx="8.8" cy="5.2" r="4.3" fill="none" stroke="#1E1E1E" stroke-width="1.2"/><path d="M5.6,8.4 L0.8,13.2" stroke="#1E1E1E" stroke-width="1.4"/></svg>
<div class="t" style="left:726px;top:293.84px;font-size:12px;line-height:12px;color:#1E1E1E;font-weight:normal;font-family:'Liberation Sans',sans-serif;letter-spacing:-0.400px;">Search</div>
<svg style="position:absolute;left:766px;top:299px;" width="6" height="4.0" viewBox="0 0 6 4.0"><path d="M0,0 H6 L3.0,3.0 Z" fill="#1E1E1E"/></svg>
<div style="left:794px;top:288px;width:126px;height:24px;background:#E8EDFA;"></div>
<div class="t" style="left:802px;top:293.84px;font-size:12px;line-height:12px;color:#2E3A72;font-weight:normal;font-family:'Liberation Sans',sans-serif;letter-spacing:0.000px;">ConsoleApplication2</div>
<div class="t" style="left:1057px;top:294.84px;font-size:12px;line-height:12px;color:#1E1E1E;font-weight:normal;font-family:'Liberation Sans',sans-serif;letter-spacing:0.000px;">Sign in</div>
<svg style="position:absolute;left:1100px;top:292px;" width="15" height="15" viewBox="0 0 15 15"><path d="M1,3.5 H6.5 M3.75,0.8 V6.2" stroke="#1E8A1E" stroke-width="1.1"/><circle cx="9" cy="6.6" r="3" fill="none" stroke="#1E1E1E" stroke-width="1.1"/><path d="M4.3,14.2 C4.8,11.5 6.6,10.2 9,10.2 C11.4,10.2 13.2,11.5 13.7,14.2" fill="none" stroke="#1E1E1E" stroke-width="1.1"/></svg>
<svg style="position:absolute;left:12px;top:321px;" width="5" height="17" viewBox="0 0 5 17"><rect x="0" y="0" width="1" height="1" fill="#3C4168"/><rect x="4" y="0" width="1" height="1" fill="#3C4168"/><rect x="2" y="2" width="1" height="1" fill="#3C4168"/><rect x="0" y="4" width="1" height="1" fill="#3C4168"/><rect x="4" y="4" width="1" height="1" fill="#3C4168"/><rect x="2" y="6" width="1" height="1" fill="#3C4168"/><rect x="0" y="8" width="1" height="1" fill="#3C4168"/><rect x="4" y="8" width="1" height="1" fill="#3C4168"/><rect x="2" y="10" width="1" height="1" fill="#3C4168"/><rect x="0" y="12" width="1" height="1" fill="#3C4168"/><rect x="4" y="12" width="1" height="1" fill="#3C4168"/><rect x="2" y="14" width="1" height="1" fill="#3C4168"/><rect x="0" y="16" width="1" height="1" fill="#3C4168"/><rect x="4" y="16" width="1" height="1" fill="#3C4168"/></svg>
<svg style="position:absolute;left:25px;top:323px;" width="13" height="13" viewBox="0 0 13 13"><circle cx="6.5" cy="6.5" r="5.9" fill="#C6D3EE" stroke="#1E6FC0" stroke-width="1.2"/><path d="M10,6.5 H3.5 M6.5,3.5 L3.5,6.5 L6.5,9.5" fill="none" stroke="#1E6FC0" stroke-width="1.2"/></svg>
<svg style="position:absolute;left:46px;top:329px;" width="6" height="4.0" viewBox="0 0 6 4.0"><path d="M0,0 H6 L3.0,3.0 Z" fill="#1E1E1E"/></svg>
<svg style="position:absolute;left:59px;top:323px;" width="13" height="13" viewBox="0 0 13 13"><circle cx="6.5" cy="6.5" r="5.9" fill="none" stroke="#A8B0C6" stroke-width="1.2"/><path d="M3,6.5 H9.5 M6.5,3.5 L9.5,6.5 L6.5,9.5" fill="none" stroke="#A8B0C6" stroke-width="1.2"/></svg>
<div style="left:80px;top:320px;width:1px;height:20px;background:#9AA6C8;"></div>
<svg style="position:absolute;left:88px;top:321px;" width="18" height="18" viewBox="0 0 18 18"><rect x="9.5" y="3.5" width="7" height="9" fill="#C8CEE0" stroke="#3C3C3C" stroke-width="1"/><rect x="6.5" y="7.5" width="7" height="9" fill="#C4CADC" stroke="#1E1E1E" stroke-width="1.1"/><path d="M3.5,9 V14.5 H6.5" fill="none" stroke="#3C3C3C" stroke-width="1"/><g stroke="#B07C08" stroke-width="1.1"><path d="M4.5,0.8 V2.8 M4.5,6.2 V8.2 M0.8,4.5 H2.8 M6.2,4.5 H8.2 M1.9,1.9 L3,3 M6,6 L7.1,7.1 M7.1,1.9 L6,3 M3,6 L1.9,7.1"/></g></svg>
<svg style="position:absolute;left:111px;top:329px;" width="6" height="4.0" viewBox="0 0 6 4.0"><path d="M0,0 H6 L3.0,3.0 Z" fill="#1E1E1E"/></svg>
<svg style="position:absolute;left:123px;top:322px;" width="16" height="15" viewBox="0 0 16 15"><path d="M0.5,4.5 H5 L6,5.5 H11.5 V13.5 H0.5 Z" fill="#C9B37A" stroke="#9A7318"/><path d="M0.5,13.5 L3,8.5 H15 L12,13.5 Z" fill="#B69A5A" stroke="#9A7318"/><path d="M9.5,6 C9.5,3 11,2 13.5,2 M12,0.5 L14,2 L12,3.5" fill="none" stroke="#1E6FC0" stroke-width="1.2"/></svg>
<svg style="position:absolute;left:146px;top:323px;" width="15" height="15" viewBox="0 0 15 15"><path d="M0.7,0.7 H12 L14.3,3 V14.3 H0.7 Z" fill="#C9D3EE" stroke="#1F5FBF" stroke-width="1.3"/><rect x="3.5" y="0.7" width="7" height="4.5" fill="none" stroke="#1F5FBF" stroke-width="1.3"/><rect x="3" y="8.5" width="9" height="5.8" fill="#D8E0F4" stroke="#1F5FBF" stroke-width="1.3"/></svg>
<svg style="position:absolute;left:167px;top:323px;" width="15" height="15" viewBox="0 0 15 15"><path d="M3,0.7 H14.3 V12" fill="none" stroke="#1F5FBF" stroke-width="1.2"/><path d="M0.7,2.7 H10.5 L12.3,4.5 V14.3 H0.7 Z" fill="#C9D3EE" stroke="#1F5FBF" stroke-width="1.3"/><rect x="3" y="2.7" width="6" height="4" fill="none" stroke="#1F5FBF" stroke-width="1.2"/><rect x="2.7" y="9" width="7" height="5.3" fill="#D8E0F4" stroke="#1F5FBF" stroke-width="1.2"/></svg>
<div style="left:189px;top:320px;width:1px;height:20px;background:#9AA6C8;"></div>
<svg style="position:absolute;left:198px;top:323px;" width="13" height="14" viewBox="0 0 13 14"><g ><path d="M1.5,1.5 V6 H6" fill="none" stroke="#A8B0C6" stroke-width="1.2"/><path d="M1.8,5.8 C4,2.5 9,2 11,4.5 C13,7 11.5,10 5.5,13.5" fill="none" stroke="#A8B0C6" stroke-width="1.3"/></g></svg>
<svg style="position:absolute;left:220px;top:329px;" width="6" height="4.0" viewBox="0 0 6 4.0"><path d="M0,0 H6 L3.0,3.0 Z" fill="#8A92A8"/></svg>
<svg style="position:absolute;left:233px;top:323px;" width="13" height="14" viewBox="0 0 13 14"><g transform="translate(13,0) scale(-1,1)"><path d="M1.5,1.5 V6 H6" fill="none" stroke="#A8B0C6" stroke-width="1.2"/><path d="M1.8,5.8 C4,2.5 9,2 11,4.5 C13,7 11.5,10 5.5,13.5" fill="none" stroke="#A8B0C6" stroke-width="1.3"/></g></svg>
<svg style="position:absolute;left:255px;top:329px;" width="6" height="4.0" viewBox="0 0 6 4.0"><path d="M0,0 H6 L3.0,3.0 Z" fill="#8A92A8"/></svg>
<div style="left:267px;top:320px;width:1px;height:20px;background:#9AA6C8;"></div>
<div style="left:275px;top:320px;width:63px;height:19px;background:#F5F7FC;border:1px solid #A6AECB;"></div>
<div class="t" style="left:279px;top:324.34px;font-size:12px;line-height:12px;color:#1E1E1E;font-weight:normal;font-family:'Liberation Sans',sans-serif;">Debug</div>
<svg style="position:absolute;left:330px;top:329px;" width="6" height="4.0" viewBox="0 0 6 4.0"><path d="M0,0 H6 L3.0,3.0 Z" fill="#1E1E1E"/></svg>
<div style="left:346px;top:320px;width:108px;height:19px;background:#F5F7FC;border:1px solid #A6AECB;"></div>
<div class="t" style="left:350px;top:324.34px;font-size:12px;line-height:12px;color:#1E1E1E;font-weight:normal;font-family:'Liberation Sans',sans-serif;">x64</div>
<svg style="position:absolute;left:446px;top:329px;" width="6" height="4.0" viewBox="0 0 6 4.0"><path d="M0,0 H6 L3.0,3.0 Z" fill="#1E1E1E"/></svg>
<svg style="position:absolute;left:466px;top:323px;" width="11" height="13" viewBox="0 0 11 13"><path d="M0.5,0.5 L10.5,6.5 L0.5,12.5 Z" fill="#1E7A1E"/></svg>
<div class="t" style="left:484px;top:324.34px;font-size:12px;line-height:12px;color:#1E1E1E;font-weight:normal;font-family:'Liberation Sans',sans-serif;letter-spacing:-0.095px;">Local Windows Debugger</div>
<svg style="position:absolute;left:624px;top:329px;" width="6" height="4.0" viewBox="0 0 6 4.0"><path d="M0,0 H6 L3.0,3.0 Z" fill="#1E1E1E"/></svg>
<svg style="position:absolute;left:638.5px;top:323px;" width="11" height="13" viewBox="0 0 11 13"><path d="M1,1 L9.8,6.5 L1,12 Z" fill="#C8D2E6" stroke="#1E7A1E" stroke-width="1.2"/></svg>
<svg style="position:absolute;left:661px;top:322px;" width="14" height="15" viewBox="0 0 14 15"><path d="M7,14.5 C2,14.5 0.5,10 2.5,6.5 C3,8.5 4,9 5,9 C3.5,5 6,2 9.5,0.5 C8,4 10,5 11,6 C13.5,8.5 13,14.5 7,14.5 Z" fill="#B8BFD0" stroke="#A8AFC0" stroke-width="0.8"/></svg>
<svg style="position:absolute;left:681px;top:329px;" width="6" height="4.0" viewBox="0 0 6 4.0"><path d="M0,0 H6 L3.0,3.0 Z" fill="#8A92A8"/></svg>
<div style="left:694px;top:320px;width:1px;height:20px;background:#9AA6C8;"></div>
<svg style="position:absolute;left:702px;top:323px;" width="16" height="15" viewBox="0 0 16 15"><path d="M0.5,1.5 H5 L6,2.5 H13.5 V11.5 H0.5 Z" fill="#C4B080" stroke="#9A7318"/><path d="M0.5,4.5 H13.5" stroke="#9A7318"/><circle cx="11.5" cy="8.5" r="2.8" fill="#DCE6F8" stroke="#1E6FC0" stroke-width="1.3"/><path d="M9.5,10.5 L6.5,14" stroke="#1E6FC0" stroke-width="1.5"/></svg>
<div style="left:724px;top:320px;width:1px;height:20px;background:#9AA6C8;"></div>
<svg style="position:absolute;left:732px;top:324px;" width="15" height="15" viewBox="0 0 15 15"><rect x="0.5" y="0.5" width="13.5" height="11.5" fill="#C8D0E8" stroke="#1E1E1E"/><rect x="1" y="1" width="12.5" height="2.5" fill="#CCD5F0"/><path d="M0.5,3.5 H14" stroke="#1E1E1E"/><path d="M1,10 L4.5,6.5 L8,10 V14.5 H1 Z" fill="#CCD5F0" stroke="#1E6FC0" stroke-width="1.2"/><rect x="3.5" y="11" width="2" height="3.5" fill="#1E6FC0"/></svg>
<svg style="position:absolute;left:754px;top:332px;" width="7" height="7" viewBox="0 0 7 7"><path d="M0,1.5 H7" stroke="#1E1E1E"/><path d="M0.5,3 H6.5 L3.5,6 Z" fill="#1E1E1E"/></svg>
<svg style="position:absolute;left:765px;top:321px;" width="5" height="17" viewBox="0 0 5 17"><rect x="0" y="0" width="1" height="1" fill="#3C4168"/><rect x="4" y="0" width="1" height="1" fill="#3C4168"/><rect x="2" y="2" width="1" height="1" fill="#3C4168"/><rect x="0" y="4" width="1" height="1" fill="#3C4168"/><rect x="4" y="4" width="1" height="1" fill="#3C4168"/><rect x="2" y="6" width="1" height="1" fill="#3C4168"/><rect x="0" y="8" width="1" height="1" fill="#3C4168"/><rect x="4" y="8" width="1" height="1" fill="#3C4168"/><rect x="2" y="10" width="1" height="1" fill="#3C4168"/><rect x="0" y="12" width="1" height="1" fill="#3C4168"/><rect x="4" y="12" width="1" height="1" fill="#3C4168"/><rect x="2" y="14" width="1" height="1" fill="#3C4168"/><rect x="0" y="16" width="1" height="1" fill="#3C4168"/><rect x="4" y="16" width="1" height="1" fill="#3C4168"/></svg>
<svg style="position:absolute;left:776px;top:321px;" width="15" height="18" viewBox="0 0 15 18"><text x="0" y="10" font-family="Liberation Sans" font-weight="bold" font-size="8.5" fill="#1E1E1E" letter-spacing="-0.2">abc</text><path d="M3.5,13 L6.5,16 L11.5,11.5" fill="none" stroke="#1E8A1E" stroke-width="1.3"/></svg>
<div style="left:798px;top:320px;width:1px;height:20px;background:#9AA6C8;"></div>
<svg style="position:absolute;left:806px;top:322px;" width="17" height="16" viewBox="0 0 17 16"><path d="M1,0.5 L1,9.5 L3.2,7.5 L4.8,10.5 L6,10 L4.6,7 L7.5,7 Z" fill="#1E5FB0"/><rect x="3.5" y="10.5" width="12" height="4" fill="none" stroke="#1E1E1E" stroke-width="1.1"/><path d="M5.5,12.5 H13.5" stroke="#1E1E1E"/></svg>
<svg style="position:absolute;left:829px;top:322px;" width="15" height="15" viewBox="0 0 15 15"><g stroke="#A8B0C6" fill="none"><path d="M1.5,3.5 V13.5 M1.5,8.5 H4 M3,6 L1.5,3.5 L0,6"/><path d="M6,1.5 H14 M6,4.5 H14 M6,7.5 H14 M6,10.5 H14 M6,13.5 H14"/><rect x="4.5" y="1.5" width="10" height="12"/></g></svg>
<div style="left:851px;top:320px;width:1px;height:20px;background:#9AA6C8;"></div>
<svg style="position:absolute;left:860px;top:321px;" width="16" height="15" viewBox="0 0 16 15"><path d="M0,3.5 H3" stroke="#3A3A3A"/><path d="M4,3.5 H12" stroke="#2A8A2A"/><path d="M4,5.5 H12" stroke="#2A8A2A"/><path d="M4,7.5 H12" stroke="#2A8A2A"/><path d="M4,9.5 H12" stroke="#2A8A2A"/><path d="M3,11.5 H12" stroke="#3A3A3A"/><path d="M3,13.5 H12" stroke="#3A3A3A"/></svg>
<svg style="position:absolute;left:879px;top:321px;" width="16" height="15" viewBox="0 0 16 15"><path d="M8,3.5 H15.5" stroke="#3A3A3A"/><path d="M8,5.5 H15.5" stroke="#3A3A3A"/><path d="M8,7.5 H15.5" stroke="#3A3A3A"/><path d="M8,9.5 H15.5" stroke="#3A3A3A"/><path d="M8,11.5 H15.5" stroke="#3A3A3A"/><path d="M8,13.5 H15.5" stroke="#3A3A3A"/><path d="M1.5,3 H4.5 C6.5,3 7.5,4.5 7,6 C6.5,7.5 4.5,8.5 3,9.5 M2.8,1 L1,3 L2.8,5" fill="none" stroke="#1E6FC0" stroke-width="1.3"/></svg>
<div style="left:903px;top:320px;width:1px;height:20px;background:#9AA6C8;"></div>
<svg style="position:absolute;left:912.5px;top:322.5px;" width="11" height="15" viewBox="0 0 11 15"><path d="M1,0.7 H10 V13.8 L5.5,9.5 L1,13.8 Z" fill="#C4CBE0" stroke="#1E1E1E" stroke-width="1.3"/></svg>
<svg style="position:absolute;left:933px;top:322.5px;" width="15" height="15" viewBox="0 0 15 15"><path d="M4.5,1.5 H13.5 V13.8 L9,9.5 L4.5,13.8 Z" fill="none" stroke="#A4ACC2" stroke-width="1.2"/><path d="M0.5,6.5 H7 M3,4 L0.5,6.5 L3,9" fill="none" stroke="#A4ACC2"/></svg>
<svg style="position:absolute;left:954px;top:322.5px;" width="15" height="15" viewBox="0 0 15 15"><path d="M4.5,1.5 H13.5 V13.8 L9,9.5 L4.5,13.8 Z" fill="none" stroke="#A4ACC2" stroke-width="1.2"/><path d="M0,6.5 H8 M5.5,4 L8,6.5 L5.5,9" fill="none" stroke="#A4ACC2"/></svg>
<svg style="position:absolute;left:976px;top:322.5px;" width="15" height="15" viewBox="0 0 15 15"><path d="M4.5,1.5 H13.5 V13.8 L9,9.5 L4.5,13.8 Z" fill="none" stroke="#A4ACC2" stroke-width="1.2"/><path d="M0.5,0.5 L4.5,4.5 M4.5,0.5 L0.5,4.5" stroke="#A4ACC2"/></svg>
<svg style="position:absolute;left:999px;top:332px;" width="7" height="7" viewBox="0 0 7 7"><path d="M0,1.5 H7" stroke="#1E1E1E"/><path d="M0.5,3 H6.5 L3.5,6 Z" fill="#1E1E1E"/></svg>
<div style="left:-1px;top:350px;width:1124px;height:407px;background:#5D6B99;"></div>
<div style="left:0px;top:356px;width:6px;height:70px;background:#4A5A8E;"></div>
<div class="t" style="left:10px;top:356px;width:14px;height:72px;"><div style="position:absolute;left:0;top:0;transform-origin:0 0;transform:translate(13px,0) rotate(90deg);font-size:12px;line-height:13px;color:#E8ECF8;letter-spacing:-0.364px;font-family:'Liberation Sans',sans-serif;white-space:nowrap">JSON Outline</div></div>
<div style="left:33px;top:356px;width:185px;height:20px;background:#40568D;"></div>
<div class="t" style="left:37.5px;top:360.84px;font-size:12px;line-height:12px;color:#E8ECF8;font-weight:normal;font-family:'Liberation Sans',sans-serif;letter-spacing:0.000px;">ConsoleApplication2.cpp*</div>
<div style="left:668px;top:356px;width:116px;height:20px;background:#F5CC84;"></div>
<div class="t" style="left:673px;top:360.84px;font-size:12px;line-height:12px;color:#1E1E1E;font-weight:bold;font-family:'Liberation Sans',sans-serif;letter-spacing:-0.150px;">minwindef.h</div>
<svg style="position:absolute;left:750px;top:362px;" width="11" height="10" viewBox="0 0 11 10"><path d="M0.5,0.5 L3.5,3.5" stroke="#1E1E1E" stroke-width="1.1"/><path d="M3,3 H7 V6 H10 V9 H2 V6 H3 Z" fill="#1E1E1E"/></svg>
<svg style="position:absolute;left:768px;top:361px;" width="10" height="10" viewBox="0 0 10 10"><path d="M0.8,0.8 L9.2,9.2 M9.2,0.8 L0.8,9.2" stroke="#1E1E1E" stroke-width="1.3"/></svg>
<svg style="position:absolute;left:787px;top:366px;" width="8" height="5.0" viewBox="0 0 8 5.0"><path d="M0,0 H8 L4.0,4.0 Z" fill="#E8ECF8"/></svg>
<svg style="position:absolute;left:804px;top:361px;" width="11" height="11" viewBox="0 0 11 11"><path d="M10.38,4.41 L10.38,6.59 L9.03,6.59 L8.77,7.23 L9.72,8.18 L8.18,9.72 L7.23,8.77 L6.59,9.03 L6.59,10.38 L4.41,10.38 L4.41,9.03 L3.77,8.77 L2.82,9.72 L1.28,8.18 L2.23,7.23 L1.97,6.59 L0.62,6.59 L0.62,4.41 L1.97,4.41 L2.23,3.77 L1.28,2.82 L2.82,1.28 L3.77,2.23 L4.41,1.97 L4.41,0.62 L6.59,0.62 L6.59,1.97 L7.23,2.23 L8.18,1.28 L9.72,2.82 L8.77,3.77 L9.03,4.41 Z M5.5,3.9 A1.6,1.6 0 1 0 5.5,7.1 A1.6,1.6 0 1 0 5.5,3.9 Z" fill="#E8ECF8" fill-rule="evenodd"/></svg>
<div style="left:32px;top:376px;width:783px;height:2px;background:#F5CC84;"></div>
<div style="left:32px;top:378px;width:783px;height:22px;background:#CCD5F0;"></div>
<div style="left:33px;top:378px;width:250px;height:19px;background:#F5F7FC;border:1px solid #A6AECB;"></div>
<svg style="position:absolute;left:36px;top:382px;" width="14" height="12" viewBox="0 0 14 12"><rect x="0.5" y="0.5" width="13" height="11" fill="#E4E4EA" stroke="#424242"/><path d="M4.5,2 V7 M2,4.5 H7 M9.5,5 V10 M7,7.5 H12" stroke="#A020C0" stroke-width="1"/></svg>
<div class="t" style="left:53px;top:382.84px;font-size:12px;line-height:12px;color:#1E1E1E;font-weight:normal;font-family:'Liberation Sans',sans-serif;letter-spacing:0.000px;">ConsoleApplication2</div>
<svg style="position:absolute;left:277px;top:388px;" width="6" height="4.0" viewBox="0 0 6 4.0"><path d="M0,0 H6 L3.0,3.0 Z" fill="#1E1E1E"/></svg>
<div style="left:289px;top:378px;width:249px;height:19px;background:#F5F7FC;border:1px solid #A6AECB;"></div>
<div class="t" style="left:309px;top:382.84px;font-size:12px;line-height:12px;color:#1E1E1E;font-weight:normal;font-family:'Liberation Sans',sans-serif;letter-spacing:-0.154px;">(Global Scope)</div>
<svg style="position:absolute;left:531px;top:388px;" width="6" height="4.0" viewBox="0 0 6 4.0"><path d="M0,0 H6 L3.0,3.0 Z" fill="#1E1E1E"/></svg>
<div style="left:543px;top:378px;width:250px;height:19px;background:#F5F7FC;border:1px solid #A6AECB;"></div>
<svg style="position:absolute;left:786px;top:388px;" width="6" height="4.0" viewBox="0 0 6 4.0"><path d="M0,0 H6 L3.0,3.0 Z" fill="#1E1E1E"/></svg>
<div style="left:796px;top:378px;width:19px;height:22px;background:#E4E8F6;"></div>
<svg style="position:absolute;left:799px;top:381px;" width="14" height="16" viewBox="0 0 14 16"><path d="M0,6.5 H14 M0,9.5 H14 M7,1 V6 M7,10 V15 M4.5,3.5 L7,1 L9.5,3.5 M4.5,12.5 L7,15 L9.5,12.5" fill="none" stroke="#1E1E1E" stroke-width="1.1"/></svg>
<div style="left:32px;top:400px;width:764px;height:357px;background:#FFFFFF;"></div>
<div style="left:32px;top:400px;width:14px;height:357px;background:#E6E7EC;"></div>
<div style="left:796px;top:400px;width:19px;height:357px;background:#E8E8EC;"></div>
<svg style="position:absolute;left:800px;top:406px;" width="10" height="6" viewBox="0 0 10 6"><path d="M0.5,5.5 L5,0.5 L9.5,5.5 Z" fill="#868999"/></svg>
<div style="left:823px;top:357px;width:300px;height:21px;background:#40568D;"></div>
<div class="t" style="left:827px;top:361.84px;font-size:12px;line-height:12px;color:#FFFFFF;font-weight:normal;font-family:'Liberation Sans',sans-serif;letter-spacing:-0.062px;">Solution Explorer</div>
<div style="left:823px;top:378px;width:300px;height:28px;background:#CCD5F0;"></div>
<svg style="position:absolute;left:831px;top:385px;" width="13" height="13" viewBox="0 0 13 13"><circle cx="6.5" cy="6.5" r="5.9" fill="none" stroke="#A8B0C6" stroke-width="1.2"/><path d="M10,6.5 H3.5 M6.5,3.5 L3.5,6.5 L6.5,9.5" fill="none" stroke="#A8B0C6" stroke-width="1.2"/></svg>
<svg style="position:absolute;left:853px;top:385px;" width="13" height="13" viewBox="0 0 13 13"><circle cx="6.5" cy="6.5" r="5.9" fill="none" stroke="#A8B0C6" stroke-width="1.2"/><path d="M3,6.5 H9.5 M6.5,3.5 L9.5,6.5 L6.5,9.5" fill="none" stroke="#A8B0C6" stroke-width="1.2"/></svg>
<svg style="position:absolute;left:874px;top:385px;" width="16" height="15" viewBox="0 0 16 15"><path d="M3,6 V13.5 H6.5 V9.5 H9.5 V13.5 H13 V6 L8,1.5 Z" fill="#C8CEE2"/><path d="M0.8,7.5 L8,1 L15.2,7.5 M3,6 V13.5 H6.5 V9.5 H9.5 V13.5 H13 V6" fill="none" stroke="#3A3A3A" stroke-width="1.1"/></svg>
<svg style="position:absolute;left:895px;top:384px;" width="17" height="17" viewBox="0 0 17 17"><rect x="7.5" y="1.5" width="8.5" height="10" fill="#F4F4F8" stroke="#1E1E1E"/><rect x="7.5" y="1" width="9" height="2" fill="#1E1E1E"/><path d="M11,5.5 H14.5 M11,7.5 H14.5 M11,9.5 H14.5 M9,5.5 H10 M9,7.5 H10 M9,9.5 H10" stroke="#1E1E1E"/><path d="M1.2,9.5 L3,8.6 L5.8,11 L9.3,7.8 V15.6 L5.8,12.6 L3,14.6 L1.2,13.6 Z M3,10.6 V12.6 L4.5,11.6 Z M7.8,10 L6.6,11.6 L7.8,13.3 Z" fill="#7B3FC4" fill-rule="evenodd"/></svg>
<div style="left:918px;top:382px;width:1px;height:20px;background:#9AA6C8;"></div>
<svg style="position:absolute;left:927px;top:384px;" width="15" height="16" viewBox="0 0 15 16"><path d="M0,0.5 H5.5 L3.3,2.8 V5 H2.2 V2.8 Z" fill="#1E6FC0"/><circle cx="8.6" cy="9.4" r="5" fill="#C8CEE2" stroke="#1E1E1E" stroke-width="1.1"/><path d="M8.3,6.3 V9.8 H11" fill="none" stroke="#1E1E1E" stroke-width="1.1"/></svg>
<svg style="position:absolute;left:949px;top:391px;" width="6" height="4.0" viewBox="0 0 6 4.0"><path d="M0,0 H6 L3.0,3.0 Z" fill="#1E1E1E"/></svg>
<svg style="position:absolute;left:962px;top:387px;" width="14" height="10" viewBox="0 0 14 10"><path d="M13,3 H1.5 M4,0.5 L1.5,3 M1,7 H12.5 M10,9.5 L12.5,7" fill="none" stroke="#1E1E1E" stroke-width="1.2"/></svg>
<svg style="position:absolute;left:984px;top:384px;" width="15" height="15" viewBox="0 0 15 15"><rect x="0.7" y="2.7" width="11.6" height="11.6" fill="#E8E8EE" stroke="#1E1E1E" stroke-width="1.2"/><path d="M3.5,0.7 H14.3 V11.5" fill="none" stroke="#1E1E1E" stroke-width="1.2"/><path d="M3.5,8.5 H9.5" stroke="#1E1E1E" stroke-width="1.2"/></svg>
<svg style="position:absolute;left:1006px;top:384px;" width="15" height="15" viewBox="0 0 15 15"><rect x="4.5" y="0.5" width="10" height="10" fill="#E8E8EE" stroke="#424242"/><rect x="0.5" y="4.5" width="10" height="10" fill="#DADAE2" stroke="#424242"/><path d="M4.5,4.5 V10.5 H10.5" fill="none" stroke="#9A9AA8"/></svg>
<div style="left:1027px;top:382px;width:1px;height:20px;background:#9AA6C8;"></div>
<svg style="position:absolute;left:1036px;top:385px;" width="14" height="14" viewBox="0 0 14 14"><path d="M1,13 L7,7" stroke="#1E1E1E" stroke-width="2.2"/><path d="M1,13 L7,7" stroke="#888" stroke-width="0.8"/><path d="M6.5,7.5 C5.5,5 6.5,1.5 10,1 L8.8,3.8 L10.3,5.5 L13.2,4.2 C13,7.5 10,9 7,7.8 Z" fill="#1E1E1E"/></svg>
<div style="left:1054px;top:380px;width:20px;height:22px;background:#FCEBC0;border:1px solid #A07820;"></div>
<svg style="position:absolute;left:1058px;top:387px;" width="14" height="10" viewBox="0 0 14 10"><path d="M1.5,6.5 V8.5 H11 V6.5 Z" fill="none" stroke="#1E1E1E"/><path d="M1.5,6.5 H8 M8,6.5 V4" stroke="#1E1E1E"/><path d="M10,1.5 L11,0 M12,3.5 H13.5 M11.5,2.2 L13,1" stroke="#C8A000"/></svg>
<div style="left:823px;top:406px;width:299px;height:20px;background:#FFFFFF;border:1px solid #C4CAE0;"></div>
<div class="t" style="left:828.5px;top:410.84px;font-size:12px;line-height:12px;color:#6D6D6D;font-weight:normal;font-family:'Liberation Sans',sans-serif;letter-spacing:-0.156px;">Search Solution Explorer (Ctrl+;)</div>
<div style="left:823px;top:428px;width:300px;height:567px;background:#F6F7FC;"></div>
<div style="left:823px;top:448px;width:300px;height:19px;background:#E2E4EC;"></div>
<svg style="position:absolute;left:838px;top:432px;" width="15" height="14" viewBox="0 0 15 14"><path d="M4,13.5 H0.5 V0.5 H13.5 V4.5" fill="none" stroke="#424242"/><rect x="0.5" y="0.5" width="13" height="2" fill="#424242"/><path transform="translate(4.8,5.0) scale(0.49,0.45)" d="M0,5.9 L4.1,3.1 L10,7.9 L14.4,0 L19.9,3.9 L19.9,15.8 L14.4,19.9 L10,12.2 L4.1,16.6 L0,13.8 Z M2.9,7.9 L5.4,10.1 L2.9,12.2 Z M14.9,7.5 L12,10.1 L14.9,13 Z" fill="#7B3FC4" fill-rule="evenodd"/></svg>
<div class="t" style="left:857.5px;top:432.84px;font-size:12px;line-height:12px;color:#1E1E1E;font-weight:normal;font-family:'Liberation Sans',sans-serif;letter-spacing:0.043px;">Solution &#x27;ConsoleApplication2&#x27; (1 of 1 project)</div>
<svg style="position:absolute;left:834px;top:454px;" width="7" height="7" viewBox="0 0 7 7"><path d="M6.5,0.5 V6.5 H0.5 Z" fill="#1E1E1E"/></svg>
<svg style="position:absolute;left:856px;top:452px;" width="14" height="12" viewBox="0 0 14 12"><rect x="0.5" y="0.5" width="13" height="11" fill="#E4E4EA" stroke="#424242"/><path d="M4.5,2 V7 M2,4.5 H7 M9.5,5 V10 M7,7.5 H12" stroke="#A020C0" stroke-width="1"/></svg>
<div class="t" style="left:875.5px;top:451.84px;font-size:12px;line-height:12px;color:#1E1E1E;font-weight:bold;font-family:'Liberation Sans',sans-serif;letter-spacing:-0.444px;">ConsoleApplication2</div>
<svg style="position:absolute;left:852px;top:471px;" width="6" height="10" viewBox="0 0 6 10"><path d="M0.7,0.7 L5.3,5 L0.7,9.3 Z" fill="none" stroke="#1E1E1E" stroke-width="1.1"/></svg>
<svg style="position:absolute;left:873px;top:473px;" width="16" height="7" viewBox="0 0 16 7"><rect x="0.5" y="1.5" width="4" height="4" fill="#F0F0F0" stroke="#1E1E1E"/><path d="M4.5,3.5 H8" stroke="#1E1E1E"/><rect x="8.5" y="0.5" width="7" height="6" fill="#DADADA" stroke="#1E1E1E"/></svg>
<div class="t" style="left:894.5px;top:470.84px;font-size:12px;line-height:12px;color:#1E1E1E;font-weight:normal;font-family:'Liberation Sans',sans-serif;letter-spacing:-0.389px;">References</div>
<svg style="position:absolute;left:852px;top:490px;" width="6" height="10" viewBox="0 0 6 10"><path d="M0.7,0.7 L5.3,5 L0.7,9.3 Z" fill="none" stroke="#1E1E1E" stroke-width="1.1"/></svg>
<svg style="position:absolute;left:874px;top:489px;" width="15" height="15" viewBox="0 0 15 15"><path d="M0.5,1.5 H5.5 L6.5,2.5 H13.5 V12.5 H0.5 Z" fill="#C8B68A" stroke="#9A7318"/><path d="M0.5,4.5 H13.5" stroke="#9A7318"/><rect x="0.5" y="5.5" width="7" height="7.5" fill="#FFFFFF" stroke="#1E1E1E" stroke-width="1"/><path d="M2.5,11 L5.5,8 M3.3,8 H5.5 V10.2" fill="none" stroke="#1E1E1E" stroke-width="1"/></svg>
<div class="t" style="left:894.5px;top:489.84px;font-size:12px;line-height:12px;color:#1E1E1E;font-weight:normal;font-family:'Liberation Sans',sans-serif;letter-spacing:-0.225px;">External Dependencies</div>
<svg style="position:absolute;left:874px;top:507px;" width="15" height="15" viewBox="0 0 15 15"><path d="M0.5,1.5 H5.5 L6.5,2.5 H13.5 V12.5 H0.5 Z" fill="#C8B68A" stroke="#9A7318"/><path d="M0.5,4.5 H13.5" stroke="#9A7318"/><path d="M6.5,7 H14 L11.3,10.5 V14.5 H9.3 V10.5 Z" fill="#FFFFFF" stroke="#1E6FD0" stroke-width="1.2"/></svg>
<div class="t" style="left:894.5px;top:508.84px;font-size:12px;line-height:12px;color:#1E1E1E;font-weight:normal;font-family:'Liberation Sans',sans-serif;letter-spacing:-0.364px;">Header Files</div>
<svg style="position:absolute;left:874px;top:526px;" width="15" height="15" viewBox="0 0 15 15"><path d="M0.5,1.5 H5.5 L6.5,2.5 H13.5 V12.5 H0.5 Z" fill="#C8B68A" stroke="#9A7318"/><path d="M0.5,4.5 H13.5" stroke="#9A7318"/><path d="M6.5,7 H14 L11.3,10.5 V14.5 H9.3 V10.5 Z" fill="#FFFFFF" stroke="#1E6FD0" stroke-width="1.2"/></svg>
<div class="t" style="left:894.5px;top:527.84px;font-size:12px;line-height:12px;color:#1E1E1E;font-weight:normal;font-family:'Liberation Sans',sans-serif;letter-spacing:-0.462px;">Resource Files</div>
<svg style="position:absolute;left:852px;top:547px;" width="6" height="10" viewBox="0 0 6 10"><path d="M0.7,0.7 L5.3,5 L0.7,9.3 Z" fill="none" stroke="#1E1E1E" stroke-width="1.1"/></svg>
<svg style="position:absolute;left:874px;top:545px;" width="15" height="15" viewBox="0 0 15 15"><path d="M0.5,1.5 H5.5 L6.5,2.5 H13.5 V12.5 H0.5 Z" fill="#C8B68A" stroke="#9A7318"/><path d="M0.5,4.5 H13.5" stroke="#9A7318"/><path d="M6.5,7 H14 L11.3,10.5 V14.5 H9.3 V10.5 Z" fill="#FFFFFF" stroke="#1E6FD0" stroke-width="1.2"/></svg>
<div class="t" style="left:894.5px;top:546.84px;font-size:12px;line-height:12px;color:#1E1E1E;font-weight:normal;font-family:'Liberation Sans',sans-serif;letter-spacing:-0.409px;">Source Files</div>
<div style="left:284px;top:611px;width:32px;height:14px;background:#9FC1DE;"></div>
<div style="left:103px;top:400px;width:1px;height:357px;background:#A5A5A5;"></div>
<svg style="position:absolute;left:100px;top:419px;" width="8" height="9" viewBox="0 0 8 9"><rect x="0.5" y="0.5" width="7" height="8" fill="#FFF" stroke="#B0B0B0"/><path d="M2,4.5 H6" stroke="#5A5A5A"/></svg>
<svg style="position:absolute;left:100px;top:433px;" width="8" height="9" viewBox="0 0 8 9"><rect x="0.5" y="0.5" width="7" height="8" fill="#FFF" stroke="#B0B0B0"/><path d="M2,4.5 H6" stroke="#5A5A5A"/></svg>
<div style="left:103px;top:459px;width:4px;height:1px;background:#A5A5A5;"></div>
<div style="left:103px;top:473px;width:4px;height:1px;background:#A5A5A5;"></div>
<svg style="position:absolute;left:100px;top:558px;" width="8" height="9" viewBox="0 0 8 9"><rect x="0.5" y="0.5" width="7" height="8" fill="#FFF" stroke="#B0B0B0"/><path d="M2,4.5 H6" stroke="#5A5A5A"/></svg>
<div style="left:103px;top:584px;width:4px;height:1px;background:#A5A5A5;"></div>
<div style="left:160px;top:581px;width:1px;height:1px;background:#8A8A8A;"></div>
<div style="left:163px;top:581px;width:1px;height:1px;background:#8A8A8A;"></div>
<div style="left:166px;top:581px;width:1px;height:1px;background:#8A8A8A;"></div>
<div style="left:112px;top:400px;width:0;height:13px;border-left:1px dashed #C8C8C8"></div>
<div style="left:112px;top:488px;width:0;height:13px;border-left:1px dashed #C8C8C8"></div>
<div style="left:112px;top:600px;width:0;height:13px;border-left:1px dashed #C8C8C8"></div>
<div style="left:32px;top:400px;width:797px;height:357px;overflow:hidden">
<div class="c" style="left:5.5px;top:4.00px;width:40px;text-align:right;color:#8A8A8A">141</div>
<div class="c" style="left:77.5px;top:3.00px"></div>
<div class="c" style="left:5.5px;top:17.92px;width:40px;text-align:right;color:#8A8A8A">142</div>
<div class="c" style="left:77.5px;top:16.92px"><span style="color:#808080">#ifndef </span><span style="color:#000000">_M_CEE_PURE</span></div>
<div class="c" style="left:5.5px;top:31.84px;width:40px;text-align:right;color:#8A8A8A">143</div>
<div class="c" style="left:77.5px;top:30.84px"><span style="color:#808080">#ifndef </span><span style="color:#000000">WINAPI_INLINE</span></div>
<div class="c" style="left:5.5px;top:45.76px;width:40px;text-align:right;color:#8A8A8A">144</div>
<div class="c" style="left:77.5px;top:44.76px"><span style="color:#808080">#define </span><span style="color:#8A1BFF">WINAPI_INLINE</span><span style="color:#000000">  </span><span style="color:#8A1BFF">WINAPI</span></div>
<div class="c" style="left:5.5px;top:59.68px;width:40px;text-align:right;color:#8A8A8A">145</div>
<div class="c" style="left:77.5px;top:58.68px"><span style="color:#808080">#endif</span></div>
<div class="c" style="left:5.5px;top:73.60px;width:40px;text-align:right;color:#8A8A8A">146</div>
<div class="c" style="left:77.5px;top:72.60px"><span style="color:#808080">#endif</span></div>
<div class="c" style="left:5.5px;top:87.52px;width:40px;text-align:right;color:#8A8A8A">147</div>
<div class="c" style="left:77.5px;top:86.52px"></div>
<div class="c" style="left:5.5px;top:101.44px;width:40px;text-align:right;color:#8A8A8A">148</div>
<div class="c" style="left:77.5px;top:100.44px"><span style="color:#808080">#undef </span><span style="color:#000000">FAR</span></div>
<div class="c" style="left:5.5px;top:115.36px;width:40px;text-align:right;color:#8A8A8A">149</div>
<div class="c" style="left:77.5px;top:114.36px"><span style="color:#808080">#undef  </span><span style="color:#000000">NEAR</span></div>
<div class="c" style="left:5.5px;top:129.28px;width:40px;text-align:right;color:#8A8A8A">150</div>
<div class="c" style="left:77.5px;top:128.28px"><span style="color:#808080">#define </span><span style="color:#8A1BFF">FAR</span><span style="color:#000000">                 </span><span style="color:#8A1BFF">far</span></div>
<div class="c" style="left:5.5px;top:143.20px;width:40px;text-align:right;color:#8A8A8A">151</div>
<div class="c" style="left:77.5px;top:142.20px"><span style="color:#808080">#define </span><span style="color:#8A1BFF">NEAR</span><span style="color:#000000">                </span><span style="color:#8A1BFF">near</span></div>
<div class="c" style="left:5.5px;top:157.12px;width:40px;text-align:right;color:#8A8A8A">152</div>
<div class="c" style="left:77.5px;top:156.12px"><span style="color:#808080">#ifndef </span><span style="color:#000000">CONST</span></div>
<div class="c" style="left:5.5px;top:171.04px;width:40px;text-align:right;color:#8A8A8A">153</div>
<div class="c" style="left:77.5px;top:170.04px"><span style="color:#808080">#define </span><span style="color:#8A1BFF">CONST</span><span style="color:#000000">               </span><span style="color:#0000FF">const</span></div>
<div class="c" style="left:5.5px;top:184.96px;width:40px;text-align:right;color:#8A8A8A">154</div>
<div class="c" style="left:77.5px;top:183.96px"><span style="color:#808080">#endif</span></div>
<div class="c" style="left:5.5px;top:198.88px;width:40px;text-align:right;color:#8A8A8A">155</div>
<div class="c" style="left:77.5px;top:197.88px"></div>
<div class="c" style="left:5.5px;top:212.80px;width:40px;text-align:right;color:#1E1E1E">156</div>
<div class="c" style="left:77.5px;top:211.80px"><span style="color:#0000FF">typedef unsigned long</span><span style="color:#000000">       </span><span style="color:#2B91AF">DWORD</span><span style="color:#000000">;</span></div>
<div class="c" style="left:5.5px;top:226.72px;width:40px;text-align:right;color:#8A8A8A">157</div>
<div class="c" style="left:77.5px;top:225.72px"><span style="color:#0000FF">typedef int</span><span style="color:#000000">                 </span><span style="color:#2B91AF">BOOL</span><span style="color:#000000">;</span></div>
<div class="c" style="left:5.5px;top:240.64px;width:40px;text-align:right;color:#8A8A8A">158</div>
<div class="c" style="left:77.5px;top:239.64px"><span style="color:#0000FF">typedef unsigned char</span><span style="color:#000000">       </span><span style="color:#2B91AF">BYTE</span><span style="color:#000000">;</span></div>
<div class="c" style="left:5.5px;top:254.56px;width:40px;text-align:right;color:#8A8A8A">159</div>
<div class="c" style="left:77.5px;top:253.56px"><span style="color:#0000FF">typedef unsigned short</span><span style="color:#000000">      </span><span style="color:#2B91AF">WORD</span><span style="color:#000000">;</span></div>
<div class="c" style="left:5.5px;top:268.48px;width:40px;text-align:right;color:#8A8A8A">160</div>
<div class="c" style="left:77.5px;top:267.48px"><span style="color:#0000FF">typedef float</span><span style="color:#000000">               </span><span style="color:#2B91AF">FLOAT</span><span style="color:#000000">;</span></div>
<div class="c" style="left:5.5px;top:282.40px;width:40px;text-align:right;color:#8A8A8A">161</div>
<div class="c" style="left:77.5px;top:281.40px"><span style="color:#0000FF">typedef </span><span style="color:#2B91AF">FLOAT</span><span style="color:#000000">               </span><span style="color:#000000">*</span><span style="color:#2B91AF">PFLOAT</span><span style="color:#000000">;</span></div>
<div class="c" style="left:5.5px;top:296.32px;width:40px;text-align:right;color:#8A8A8A">162</div>
<div class="c" style="left:77.5px;top:295.32px"><span style="color:#0000FF">typedef </span><span style="color:#2B91AF">BOOL</span><span style="color:#000000"> </span><span style="color:#8A1BFF">near</span><span style="color:#000000">           </span><span style="color:#000000">*</span><span style="color:#2B91AF">PBOOL</span><span style="color:#000000">;</span></div>
<div class="c" style="left:5.5px;top:310.24px;width:40px;text-align:right;color:#8A8A8A">163</div>
<div class="c" style="left:77.5px;top:309.24px"><span style="color:#0000FF">typedef </span><span style="color:#2B91AF">BOOL</span><span style="color:#000000"> </span><span style="color:#8A1BFF">far</span><span style="color:#000000">            </span><span style="color:#000000">*</span><span style="color:#2B91AF">LPBOOL</span><span style="color:#000000">;</span></div>
<div class="c" style="left:5.5px;top:324.16px;width:40px;text-align:right;color:#8A8A8A">164</div>
<div class="c" style="left:77.5px;top:323.16px"><span style="color:#0000FF">typedef </span><span style="color:#2B91AF">BYTE</span><span style="color:#000000"> </span><span style="color:#8A1BFF">near</span><span style="color:#000000">           </span><span style="color:#000000">*</span><span style="color:#2B91AF">PBYTE</span><span style="color:#000000">;</span></div>
<div class="c" style="left:5.5px;top:338.08px;width:40px;text-align:right;color:#8A8A8A">165</div>
<div class="c" style="left:77.5px;top:337.08px"><span style="color:#0000FF">typedef </span><span style="color:#2B91AF">BYTE</span><span style="color:#000000"> </span><span style="color:#8A1BFF">far</span><span style="color:#000000">            </span><span style="color:#000000">*</span><span style="color:#2B91AF">LPBYTE</span><span style="color:#000000">;</span></div>
<div class="c" style="left:5.5px;top:352.00px;width:40px;text-align:right;color:#8A8A8A">166</div>
<div class="c" style="left:77.5px;top:351.00px"><span style="color:#0000FF">typedef </span><span style="color:#0000FF">int</span><span style="color:#000000"> </span><span style="color:#8A1BFF">near</span><span style="color:#000000">            </span><span style="color:#000000">*</span><span style="color:#2B91AF">PINT</span><span style="color:#000000">;</span></div>
</div>
<div style="left:316px;top:611px;width:1px;height:14px;background:#000000;"></div>
<div style="left:809px;top:442px;width:5px;height:6px;background:#A8A8B0;"></div>
<div style="left:809px;top:489px;width:5px;height:6px;background:#A8A8B0;"></div>
<div style="left:809px;top:503px;width:5px;height:11px;background:#A8A8B0;"></div>
<div style="left:809px;top:537px;width:5px;height:6px;background:#A8A8B0;"></div>
<div style="left:809px;top:574px;width:5px;height:12px;background:#A8A8B0;"></div>
<div style="left:809px;top:607px;width:5px;height:5px;background:#A8A8B0;"></div>
<div style="left:800px;top:594px;width:11px;height:40px;background:#C2C3C9;"></div>
<div style="left:803px;top:611px;width:5px;height:6px;background:#6E6E78;"></div>
<div style="left:803px;top:630px;width:5px;height:7px;background:#6E6E78;"></div>
<div style="left:803px;top:669px;width:5px;height:13px;background:#6E6E78;"></div>
<div style="left:796px;top:613px;width:19px;height:2px;background:#0000C0;"></div>
<div style="left:823px;top:711px;width:300px;height:28px;background:#5D6B99;"></div>
<div style="left:823px;top:711px;width:100px;height:20px;background:#F6F7FC;"></div>
<div class="t" style="left:828px;top:714.84px;font-size:12px;line-height:12px;color:#1E1E1E;font-weight:normal;font-family:'Liberation Sans',sans-serif;letter-spacing:-0.062px;">Solution Explorer</div>
<div style="left:923px;top:712px;width:76px;height:18px;background:#40568D;"></div>
<div class="t" style="left:930.3px;top:714.84px;font-size:12px;line-height:12px;color:#E8ECF8;font-weight:normal;font-family:'Liberation Sans',sans-serif;letter-spacing:-0.250px;">Git Changes</div>
<div style="left:823px;top:739px;width:300px;height:18px;background:#40568D;"></div>
<div class="t" style="left:828px;top:743.84px;font-size:12px;line-height:12px;color:#FFFFFF;font-weight:normal;font-family:'Liberation Sans',sans-serif;letter-spacing:-0.222px;">Properties</div>
<div style="left:0px;top:0px;width:1px;height:283px;background:#1E3674;"></div>
<div style="left:117px;top:224px;width:94px;height:11px;border:3px solid #EC1C24"></div>
<svg style="position:absolute;left:0px;top:0px;pointer-events:none" width="1123" height="757" viewBox="0 0 1123 757"><g stroke="#EC1C24" stroke-width="3.2" fill="none" stroke-linecap="round" stroke-linejoin="round"><path d="M208.5,238 L283.5,575 L291,602.5"/><path d="M270,593 L291,602.5 L297,585"/></g></svg>
</div></body></html>
